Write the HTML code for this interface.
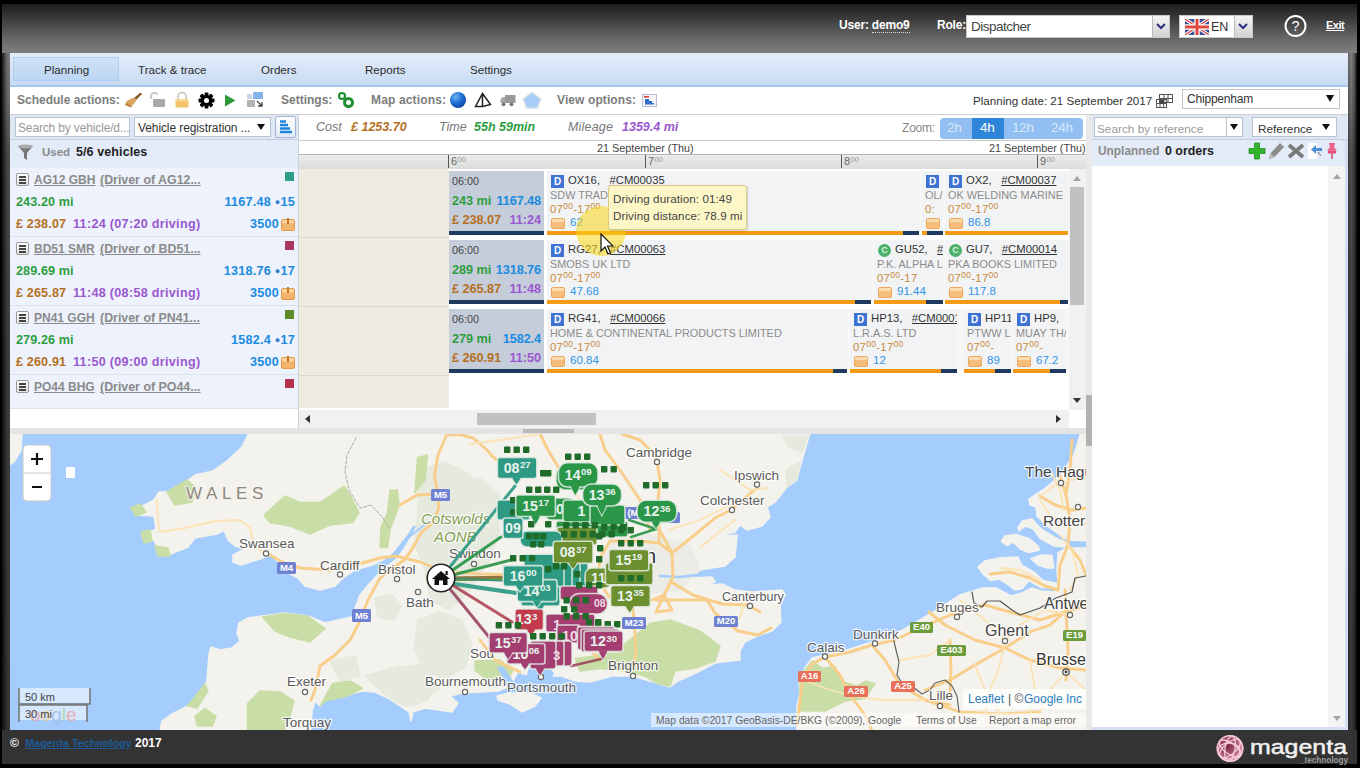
<!DOCTYPE html>
<html><head><meta charset="utf-8"><title>Planning</title>
<style>
*{box-sizing:border-box;margin:0;padding:0}
html,body{width:1360px;height:768px;overflow:hidden;background:#000}
body{font-family:"Liberation Sans",sans-serif;font-size:12px;color:#333;position:relative}
.abs{position:absolute}
#bg{left:2px;top:4px;width:1355px;height:760px;background:linear-gradient(#1c1c1c 0px,#3a3a3a 14px,#6a6a6a 36px,#808080 50px,#6e6e6e 100px,#505050 150px,#444 300px,#3a3a3a 726px)}
#bgl{left:2px;top:53px;width:9px;height:677px;background:linear-gradient(90deg,rgba(0,0,0,.8),rgba(0,0,0,.15) 55%,rgba(0,0,0,0))}
#bgr{left:1348px;top:53px;width:9px;height:677px;background:linear-gradient(90deg,rgba(0,0,0,.25),rgba(0,0,0,.0) 35%,rgba(0,0,0,.3) 70%,rgba(0,0,0,.9))}
#foot{left:2px;top:730px;width:1355px;height:34px;background:#333}
.w{color:#fff;font-weight:700}
#app{left:10px;top:53px;width:1338px;height:677px;background:#fff;overflow:hidden}
/* everything inside #app uses page coords via inner offset wrapper */
#in{position:absolute;left:-10px;top:-53px;width:1360px;height:768px}
#tabs{left:10px;top:53px;width:1338px;height:33px;background:linear-gradient(#e4edf9,#d3e2f6 60%,#c7dbf4)}
#tabline{left:10px;top:85px;width:1338px;height:2px;background:#a9c6ec}
.tab{top:63px;font-size:11.6px;color:#2b2b2b;white-space:nowrap}
#tabsel{left:13px;top:57px;width:106px;height:24px;background:linear-gradient(#cfe2f7,#bcd6f3);border:1px solid #b3cdee}
.lbl{font-weight:700;color:#7d7d7d;font-size:12px;white-space:nowrap}
.t{white-space:nowrap}

.g{color:#2d9e3f}.b{color:#1a8be0}.o{color:#b5701f}.p{color:#9a58cf}
.vb{font-weight:700;font-size:12px;white-space:nowrap;position:absolute}
.vn{font-weight:700;font-size:12px;white-space:nowrap;position:absolute;color:#8a8a8a;text-decoration:underline}
.row{position:absolute;left:10px;width:289px;background:#edf2fc}
.ham{position:absolute;left:16px;width:13px;height:13px;border:1px solid #999;border-radius:2px;background:linear-gradient(#fff,#e2e2e2)}
.ham i{position:absolute;left:2px;width:7px;height:1.500px;background:#444}
.sq{position:absolute;left:285px;width:9px;height:9px;margin-top:-1px}
.bx{position:absolute;left:281px;width:14px;height:14px}
.inp{position:absolute;background:#fff;border:1px solid #b9c2d0;font-size:12px;color:#9a9a9a;white-space:nowrap;overflow:hidden;padding:3px 0 0 2px}
.sel{position:absolute;background:#fff;border:1px solid #b9c2d0;font-size:12px;color:#333;white-space:nowrap;overflow:hidden;padding:3px 0 0 3px}
.arr{position:absolute;border:4px solid transparent;border-top:6px solid #111;border-bottom:0}
.it{position:absolute;font-style:italic;font-size:12.500px;white-space:nowrap;top:120px}

.gr{position:absolute;left:449px;width:620px;height:61px;background:#f7f7f8}
.ob{position:absolute;height:60px;background:#f2f3f5;overflow:hidden}
.ob2{position:absolute;height:60px;overflow:hidden}
.bar{position:absolute;height:4px}
.gt{position:absolute;font-size:11.300px;white-space:nowrap;color:#333}
.gc{position:absolute;font-size:10.900px;white-space:nowrap;color:#8c8c8c}
.tw{position:absolute;font-size:11.300px;white-space:nowrap;color:#c98a3a;letter-spacing:.3px}
.tw sup{font-size:8.500px;vertical-align:top;position:relative;top:-2px}
.wt{position:absolute;font-size:11.500px;white-space:nowrap;color:#2f95e6}
.di{position:absolute;width:13px;height:13px;background:#3f73d3;color:#fff;font-size:10px;font-weight:700;text-align:center;line-height:13px}
.ci{position:absolute;width:13px;height:13px;border-radius:7px;background:#4caf6a;color:#d9f2df;font-size:9px;font-weight:700;text-align:center;line-height:13px}
.sb{position:absolute;font-weight:700;font-size:12.700px;white-space:nowrap;letter-spacing:-.05px}
</style></head><body>
<div id="bg" class="abs"></div><div id="bgl" class="abs"></div><div id="bgr" class="abs"></div>
<div id="foot" class="abs"></div>
<!--HEADER-->
<div class="abs w t" style="left:839px;top:18px;font-size:12px;letter-spacing:-.2px">User: <span style="border-bottom:1px dotted #ddd">demo9</span></div>
<div class="abs w t" style="left:937px;top:18px;font-size:12px;letter-spacing:-.2px">Role:</div>
<div class="abs" style="left:966px;top:15px;width:204px;height:23px;background:#fff;border:1px solid #c9c9c9"></div>
<div class="abs t" style="left:971px;top:19px;font-size:13.5px;color:#444;letter-spacing:-.5px">Dispatcher</div>
<div class="abs" style="left:1152px;top:16px;width:17px;height:21px;background:linear-gradient(#f4f4f4,#d2d2d2);border-left:1px solid #bbb"></div>
<svg class="abs" style="left:1155px;top:22px" width="12" height="9" viewBox="0 0 12 9"><path d="M2 2l4 4 4-4" fill="none" stroke="#2b2f7e" stroke-width="2"/></svg>
<div class="abs" style="left:1179px;top:15px;width:74px;height:23px;background:#fff;border:1px solid #c9c9c9"></div>
<svg class="abs" style="left:1185px;top:19px" width="24" height="16" viewBox="0 0 24 16"><rect width="24" height="16" fill="#3c4c9c"/><path d="M0 0L24 16M24 0L0 16" stroke="#fff" stroke-width="3.4"/><path d="M0 0L24 16M24 0L0 16" stroke="#d8423a" stroke-width="1.2"/><path d="M12 0V16M0 8H24" stroke="#fff" stroke-width="5.4"/><path d="M12 0V16M0 8H24" stroke="#e0483e" stroke-width="3"/></svg>
<div class="abs t" style="left:1211px;top:20px;font-size:12.5px;color:#333">EN</div>
<div class="abs" style="left:1234px;top:16px;width:18px;height:21px;background:linear-gradient(#f4f4f4,#d2d2d2);border-left:1px solid #bbb"></div>
<svg class="abs" style="left:1237px;top:22px" width="12" height="9" viewBox="0 0 12 9"><path d="M2 2l4 4 4-4" fill="none" stroke="#2b2f7e" stroke-width="2"/></svg>
<svg class="abs" style="left:1283px;top:14px" width="24" height="24" viewBox="0 0 24 24"><circle cx="12.500" cy="12" r="10" fill="none" stroke="#fff" stroke-width="1.900"/><text x="12.500" y="17" text-anchor="middle" font-family="Liberation Sans" font-size="14.500" fill="#fff">?</text></svg>
<div class="abs w t" style="left:1326px;top:19px;font-size:11px;letter-spacing:-.5px;text-decoration:underline">Exit</div>
<!--/HEADER-->
<div id="app" class="abs"><div id="in">
<div id="tabs" class="abs"></div><div id="tabline" class="abs"></div>
<div id="tabsel" class="abs"></div>
<div class="abs tab" style="left:44px">Planning</div>
<div class="abs tab" style="left:138px">Track &amp; trace</div>
<div class="abs tab" style="left:261px">Orders</div>
<div class="abs tab" style="left:365px">Reports</div>
<div class="abs tab" style="left:470px">Settings</div>
<!--TOOLBAR-->
<div class="abs lbl" style="left:17px;top:93px">Schedule actions:</div>
<svg class="abs" style="left:124px;top:91px" width="19" height="18" viewBox="0 0 19 18"><path d="M16.5 1.5l1.5 1.5-6 6-2-2z" fill="#8a5a2a"/><path d="M9.5 6.5l3 3-4.5 5.5-6.5-2.5 1-2.5z" fill="#d9a45c"/><path d="M2 12l6 3-1 1.500-6-2.500z" fill="#b7803c"/></svg>
<svg class="abs" style="left:149px;top:91px" width="17" height="17" viewBox="0 0 17 17"><path d="M2 8V5a3.500 3.500 0 0 1 6.500-1.500" fill="none" stroke="#c9c9c9" stroke-width="2"/><rect x="4" y="8" width="12" height="8" rx="1" fill="#a9a9a9"/></svg>
<svg class="abs" style="left:174px;top:91px" width="16" height="17" viewBox="0 0 16 17"><path d="M4 8V5.500a4 4 0 0 1 8 0V8" fill="none" stroke="#d3cfc4" stroke-width="2"/><rect x="1.500" y="8" width="13" height="8.500" rx="1" fill="#f1c468"/><rect x="1.500" y="8" width="13" height="2.500" fill="#f7d892"/></svg>
<svg class="abs" style="left:198px;top:92px" width="17" height="17" viewBox="-8.500 -8.500 17 17"><g fill="#000"><circle r="5.600"/><rect x="-1.900" y="-8" width="3.800" height="16" rx=".8" transform="rotate(0)"/><rect x="-1.900" y="-8" width="3.800" height="16" rx=".8" transform="rotate(45)"/><rect x="-1.900" y="-8" width="3.800" height="16" rx=".8" transform="rotate(90)"/><rect x="-1.900" y="-8" width="3.800" height="16" rx=".8" transform="rotate(135)"/></g><circle r="2.500" fill="#fff"/></svg>
<svg class="abs" style="left:224px;top:94px" width="13" height="13" viewBox="0 0 13 13"><path d="M1 .5L11.500 6.500 1 12.500z" fill="#2d9a37"/></svg>
<svg class="abs" style="left:246px;top:91px" width="18" height="17" viewBox="0 0 18 17"><rect x="7" y="1" width="10" height="7" fill="#86b4ea"/><rect x="1" y="9" width="8" height="7" fill="#b3b3b3"/><rect x="1" y="3" width="5" height="5" fill="#c9d3e2"/><path d="M11 10l5 5M16 11v4h-4" stroke="#444" stroke-width="1.300" fill="none"/></svg>
<div class="abs lbl" style="left:281px;top:93px">Settings:</div>
<svg class="abs" style="left:337px;top:91px" width="18" height="18" viewBox="0 0 18 18"><circle cx="5" cy="5" r="3" fill="none" stroke="#1f8f32" stroke-width="2.200"/><circle cx="11.500" cy="11.500" r="4" fill="none" stroke="#1f8f32" stroke-width="3"/></svg>
<div class="abs lbl" style="left:371px;top:93px;letter-spacing:.15px">Map actions:</div>
<svg class="abs" style="left:450px;top:92px" width="16" height="16" viewBox="0 0 16 16"><defs><radialGradient id="gl" cx=".35" cy=".3" r=".8"><stop offset="0" stop-color="#6fb1f5"/><stop offset=".5" stop-color="#1f6fd6"/><stop offset="1" stop-color="#0c3f9a"/></radialGradient></defs><circle cx="8" cy="8" r="8" fill="url(#gl)"/></svg>
<svg class="abs" style="left:474px;top:92px" width="18" height="16" viewBox="0 0 18 16"><path d="M1.500 14.500L8.500 1.500l8 11-8 2zM8.500 1.500v13" fill="none" stroke="#222" stroke-width="1.500"/></svg>
<svg class="abs" style="left:500px;top:94px" width="16" height="13" viewBox="0 0 16 13"><rect x="5" y="1" width="10.500" height="8" fill="#9a9a9a"/><path d="M0.500 9V5.500L2.500 3H5v6z" fill="#a8a8a8"/><circle cx="3.500" cy="10.300" r="1.900" fill="#777"/><circle cx="11.500" cy="10.300" r="1.900" fill="#777"/></svg>
<svg class="abs" style="left:522px;top:91px" width="20" height="18" viewBox="0 0 20 18"><path d="M10 1.500L18.500 8l-3 9h-11l-3-9z" fill="#a5cdf5" stroke="#d4dde8" stroke-width="1.500"/></svg>
<div class="abs lbl" style="left:557px;top:93px;letter-spacing:.1px">View options:</div>
<svg class="abs" style="left:642px;top:94px" width="15" height="13" viewBox="0 0 15 13"><rect x=".5" y=".5" width="14" height="12" fill="#f4f4fa" stroke="#b9bcd8"/><rect x="2" y="2" width="5" height="1.600" fill="#d8423a"/><path d="M3 5h4v2h3v2h2v1.500H3z" fill="#2a6fc9"/></svg>
<div class="abs t" style="left:973px;top:94px;font-size:11.6px;color:#333">Planning date: 21 September 2017</div>
<svg class="abs" style="left:1155px;top:93px" width="19" height="16" viewBox="0 0 19 16"><g fill="none" stroke="#555" stroke-width="1"><rect x="4.500" y="1.500" width="13" height="8"/><path d="M9 1.500v8M13 1.500v8M4.500 5.500h13"/><rect x="1.500" y="6.500" width="10" height="8"/><path d="M5 6.500v8M8.500 6.500v8M1.500 10.500h10"/></g><rect x="5" y="7" width="3.500" height="3.500" fill="#444"/></svg>
<div class="abs" style="left:1182px;top:89px;width:158px;height:20px;background:#fff;border:1px solid #c4c4c4"></div>
<div class="abs t" style="left:1187px;top:92px;font-size:12px;color:#333;letter-spacing:-.2px">Chippenham</div>
<div class="abs" style="left:1326px;top:95px;border:4.500px solid transparent;border-top:7px solid #111;border-bottom:0"></div>
<div class="abs" style="left:10px;top:114px;width:1338px;height:1px;background:#cfcfcf"></div>
<!--/TOOLBAR-->
<!--LEFT-->
<div class="abs" style="left:10px;top:115px;width:289px;height:25px;background:#dfe7f5;border-right:1px solid #b9c3d6;border-bottom:1px solid #c3ccdc"></div>
<div class="inp" style="left:15px;top:117px;width:115px;height:20px;letter-spacing:-.15px">Search by vehicle/d...</div>
<div class="sel" style="left:134px;top:117px;width:137px;height:20px;letter-spacing:-.1px">Vehicle registration ...</div>
<div class="arr" style="left:257px;top:124px"></div>
<div class="abs" style="left:275px;top:116px;width:21px;height:22px;background:linear-gradient(#fdfdfd,#e4ebf5);border:1px solid #9fb6d6;border-radius:2px"></div>
<svg class="abs" style="left:279px;top:120px" width="13" height="14" viewBox="0 0 13 14"><path d="M1 1.500h6M1 5h8M1 8.500h10M1 12h12" stroke="#1f86e0" stroke-width="2.400"/></svg>
<div class="abs" style="left:10px;top:140px;width:289px;height:28px;background:#e3ebf9"></div>
<svg class="abs" style="left:17px;top:144px" width="17" height="18" viewBox="0 0 17 18"><path d="M1 2q7.500 3 15 0l-6 7v7l-3-2v-5z" fill="#777"/><ellipse cx="8.500" cy="2.500" rx="7.500" ry="2" fill="#aaa"/></svg>
<div class="vb" style="left:42px;top:146px;color:#8a8a8a;font-size:11.500px">Used</div>
<div class="vb" style="left:76px;top:145px;color:#222;font-size:12.500px;letter-spacing:.1px">5/6 vehicles</div>
<div class="row" style="top:168px;height:68px"></div>
<div class="abs" style="left:10px;top:236px;width:289px;height:1px;background:#dde3ee"></div>
<div class="ham" style="top:173px"><i style="top:2px"></i><i style="top:5px"></i><i style="top:8px"></i></div>
<div class="vn" style="left:34px;top:173px">AG12 GBH</div><div class="vn" style="left:100px;top:173px;font-size:12.400px">(Driver of AG12...</div>
<div class="sq" style="top:173px;background:#2f9e86"></div>
<div class="vb g" style="left:16px;top:195px;font-size:12.600px;letter-spacing:.1px">243.20 mi</div>
<div class="vb b" style="right:1065px;top:195px;font-size:12.600px;letter-spacing:.25px">1167.48 <span style="font-size:9px;position:relative;top:-1px;color:#2f80c8">●</span>15</div>
<div class="vb o" style="left:16px;top:217px;font-size:12.600px;letter-spacing:.15px">£ 238.07</div>
<div class="vb p" style="left:73px;top:217px;font-size:12.600px;letter-spacing:.3px">11:24 (07:20 driving)</div>
<div class="vb b" style="left:250px;top:217px;font-size:12.600px;letter-spacing:.25px">3500</div>
<svg class="bx" style="top:217px" viewBox="0 0 14 14"><rect x=".5" y="2.500" width="13" height="11" rx="1.500" fill="#f3b56a" stroke="#e09a45"/><rect x="1" y="3" width="12" height="3.500" fill="#f9d29c"/><rect x="6" y="1" width="2" height="6" fill="#c9782a"/></svg>
<div class="row" style="top:237px;height:68px"></div>
<div class="abs" style="left:10px;top:305px;width:289px;height:1px;background:#dde3ee"></div>
<div class="ham" style="top:242px"><i style="top:2px"></i><i style="top:5px"></i><i style="top:8px"></i></div>
<div class="vn" style="left:34px;top:242px">BD51 SMR</div><div class="vn" style="left:100px;top:242px;font-size:12.400px">(Driver of BD51...</div>
<div class="sq" style="top:242px;background:#a8385f"></div>
<div class="vb g" style="left:16px;top:264px;font-size:12.600px;letter-spacing:.1px">289.69 mi</div>
<div class="vb b" style="right:1065px;top:264px;font-size:12.600px;letter-spacing:.25px">1318.76 <span style="font-size:9px;position:relative;top:-1px;color:#2f80c8">●</span>17</div>
<div class="vb o" style="left:16px;top:286px;font-size:12.600px;letter-spacing:.15px">£ 265.87</div>
<div class="vb p" style="left:73px;top:286px;font-size:12.600px;letter-spacing:.3px">11:48 (08:58 driving)</div>
<div class="vb b" style="left:250px;top:286px;font-size:12.600px;letter-spacing:.25px">3500</div>
<svg class="bx" style="top:286px" viewBox="0 0 14 14"><rect x=".5" y="2.500" width="13" height="11" rx="1.500" fill="#f3b56a" stroke="#e09a45"/><rect x="1" y="3" width="12" height="3.500" fill="#f9d29c"/><rect x="6" y="1" width="2" height="6" fill="#c9782a"/></svg>
<div class="row" style="top:306px;height:68px"></div>
<div class="abs" style="left:10px;top:374px;width:289px;height:1px;background:#dde3ee"></div>
<div class="ham" style="top:311px"><i style="top:2px"></i><i style="top:5px"></i><i style="top:8px"></i></div>
<div class="vn" style="left:34px;top:311px">PN41 GGH</div><div class="vn" style="left:100px;top:311px;font-size:12.400px">(Driver of PN41...</div>
<div class="sq" style="top:311px;background:#5e8a2a"></div>
<div class="vb g" style="left:16px;top:333px;font-size:12.600px;letter-spacing:.1px">279.26 mi</div>
<div class="vb b" style="right:1065px;top:333px;font-size:12.600px;letter-spacing:.25px">1582.4 <span style="font-size:9px;position:relative;top:-1px;color:#2f80c8">●</span>17</div>
<div class="vb o" style="left:16px;top:355px;font-size:12.600px;letter-spacing:.15px">£ 260.91</div>
<div class="vb p" style="left:73px;top:355px;font-size:12.600px;letter-spacing:.3px">11:50 (09:00 driving)</div>
<div class="vb b" style="left:250px;top:355px;font-size:12.600px;letter-spacing:.25px">3500</div>
<svg class="bx" style="top:355px" viewBox="0 0 14 14"><rect x=".5" y="2.500" width="13" height="11" rx="1.500" fill="#f3b56a" stroke="#e09a45"/><rect x="1" y="3" width="12" height="3.500" fill="#f9d29c"/><rect x="6" y="1" width="2" height="6" fill="#c9782a"/></svg>
<div class="row" style="top:375px;height:33px"></div>
<div class="abs" style="left:10px;top:408px;width:289px;height:1px;background:#dde3ee"></div>
<div class="ham" style="top:380px"><i style="top:2px"></i><i style="top:5px"></i><i style="top:8px"></i></div>
<div class="vn" style="left:34px;top:380px">PO44 BHG</div><div class="vn" style="left:100px;top:380px;font-size:12.400px">(Driver of PO44...</div>
<div class="sq" style="top:380px;background:#b5324f"></div>
<div class="abs" style="left:298px;top:115px;width:1px;height:315px;background:#c9d1df"></div>
<div class="abs" style="left:299px;top:140px;width:787px;height:1px;background:#c9c9c9"></div>
<div class="it" style="left:316px;color:#777">Cost</div><div class="it o" style="left:351px;font-weight:700">£ 1253.70</div>
<div class="it" style="left:439px;color:#777">Time</div><div class="it g" style="left:474px;font-weight:700">55h 59min</div>
<div class="it" style="left:568px;color:#777;letter-spacing:.2px">Mileage</div><div class="it p" style="left:622px;font-weight:700">1359.4 mi</div>
<div class="abs t" style="left:902px;top:121px;font-size:12px;color:#888;letter-spacing:-.2px">Zoom:</div>
<div class="abs" style="left:940px;top:118px;width:143px;height:21px;background:#92bff1;border-radius:4px"></div>
<div class="abs" style="left:972px;top:118px;width:32px;height:21px;background:#2f86d9"></div>
<div class="abs t" style="left:947px;top:120px;font-size:13.500px;color:#d7e8fb;letter-spacing:-.3px">2h</div>
<div class="abs t" style="left:980px;top:120px;font-size:13.500px;color:#fff;letter-spacing:-.3px">4h</div>
<div class="abs t" style="left:1012px;top:120px;font-size:13.500px;color:#d7e8fb;letter-spacing:-.3px">12h</div>
<div class="abs t" style="left:1051px;top:120px;font-size:13.500px;color:#d7e8fb;letter-spacing:-.3px">24h</div>
<!--/LEFT-->
<!--GANTT-->
<div class="abs t" style="left:597px;top:142px;font-size:10.800px;color:#444">21 September (Thu)</div>
<div class="abs t" style="left:989px;top:142px;font-size:10.800px;color:#444">21 September (Thu)</div>
<div class="abs" style="left:299px;top:154px;width:787px;height:1px;background:#b5b5b5"></div>
<div class="abs" style="left:299px;top:155px;width:787px;height:14px;background:linear-gradient(#ececec,#dcdcdc)"></div>
<div class="abs" style="left:448px;top:155px;width:1px;height:13px;background:#555"></div><div class="abs t" style="left:451px;top:155px;font-size:11px;color:#666">6<span style="font-size:8px;position:relative;top:-3px;color:#999">00</span></div>
<div class="abs" style="left:645px;top:155px;width:1px;height:13px;background:#555"></div><div class="abs t" style="left:648px;top:155px;font-size:11px;color:#666">7<span style="font-size:8px;position:relative;top:-3px;color:#999">00</span></div>
<div class="abs" style="left:841px;top:155px;width:1px;height:13px;background:#555"></div><div class="abs t" style="left:844px;top:155px;font-size:11px;color:#666">8<span style="font-size:8px;position:relative;top:-3px;color:#999">00</span></div>
<div class="abs" style="left:1037px;top:155px;width:1px;height:13px;background:#555"></div><div class="abs t" style="left:1040px;top:155px;font-size:11px;color:#666">9<span style="font-size:8px;position:relative;top:-3px;color:#999">00</span></div>
<div class="abs" style="left:299px;top:169px;width:150px;height:239px;background:#efebe1"></div>
<div class="abs" style="left:299px;top:237px;width:150px;height:1px;background:#ddd8cb"></div>
<div class="abs" style="left:299px;top:306px;width:150px;height:1px;background:#ddd8cb"></div>
<div class="abs" style="left:299px;top:375px;width:150px;height:1px;background:#ddd8cb"></div>
<div class="gr" style="top:171px"></div>
<div class="abs" style="left:449px;top:171px;width:95px;height:60px;background:#c6cdda"></div><div class="bar" style="left:449px;top:231px;width:95px;background:#1f3a60"></div>
<div class="abs t" style="left:452px;top:175px;font-size:10.800px;color:#444">06:00</div><div class="sb g" style="left:452px;top:194px">243 mi</div><div class="sb b" style="right:819px;top:194px;letter-spacing:-.1px">1167.48</div><div class="sb o" style="left:452px;top:213px">£ 238.07</div><div class="sb p" style="right:819px;top:213px">11:24</div>
<div class="ob" style="left:547px;top:171px;width:372px"><div class="di" style="left:4px;top:4px">D</div><div class="gt" style="left:21px;top:3px">OX16,&nbsp;&nbsp; <u>#CM00035</u></div><div class="gc" style="left:3px;top:18px">SDW TRAD</div><div class="tw" style="left:3px;top:32px">07<sup>00</sup>-17<sup>00</sup></div><svg class="abs" style="left:4px;top:46px" width="14" height="12" viewBox="0 0 14 12"><rect x=".5" y="1.500" width="13" height="10" rx="1.500" fill="#f6bd7c" stroke="#eba75a"/><rect x="1" y="2" width="12" height="3" fill="#fbdcb0"/></svg><div class="wt" style="left:23px;top:45px">62</div></div>
<div class="bar" style="left:547px;top:231px;width:356px;background:#f59a14"></div><div class="bar" style="left:903px;top:231px;width:16px;background:#1f3a60"></div>
<div class="ob" style="left:922px;top:171px;width:21px"><div class="di" style="left:4px;top:4px">D</div><div class="gt" style="left:21px;top:3px">&nbsp;&nbsp; <u></u></div><div class="gc" style="left:3px;top:18px">OL/</div><div class="tw" style="left:3px;top:32px">0:</div><svg class="abs" style="left:4px;top:46px" width="14" height="12" viewBox="0 0 14 12"><rect x=".5" y="1.500" width="13" height="10" rx="1.500" fill="#f6bd7c" stroke="#eba75a"/><rect x="1" y="2" width="12" height="3" fill="#fbdcb0"/></svg><div class="wt" style="left:23px;top:45px"></div></div>
<div class="bar" style="left:922px;top:231px;width:5px;background:#f59a14"></div><div class="bar" style="left:927px;top:231px;width:16px;background:#1f3a60"></div>
<div class="ob" style="left:945px;top:171px;width:123px"><div class="di" style="left:4px;top:4px">D</div><div class="gt" style="left:21px;top:3px">OX2,&nbsp;&nbsp; <u>#CM00037</u></div><div class="gc" style="left:3px;top:18px">OK WELDING MARINE</div><div class="tw" style="left:3px;top:32px">07<sup>00</sup>-17<sup>00</sup></div><svg class="abs" style="left:4px;top:46px" width="14" height="12" viewBox="0 0 14 12"><rect x=".5" y="1.500" width="13" height="10" rx="1.500" fill="#f6bd7c" stroke="#eba75a"/><rect x="1" y="2" width="12" height="3" fill="#fbdcb0"/></svg><div class="wt" style="left:23px;top:45px">86.8</div></div>
<div class="bar" style="left:945px;top:231px;width:123px;background:#f59a14"></div>
<div class="gr" style="top:240px"></div>
<div class="abs" style="left:449px;top:240px;width:95px;height:60px;background:#c6cdda"></div><div class="bar" style="left:449px;top:300px;width:95px;background:#1f3a60"></div>
<div class="abs t" style="left:452px;top:244px;font-size:10.800px;color:#444">06:00</div><div class="sb g" style="left:452px;top:263px">289 mi</div><div class="sb b" style="right:819px;top:263px;letter-spacing:-.1px">1318.76</div><div class="sb o" style="left:452px;top:282px">£ 265.87</div><div class="sb p" style="right:819px;top:282px">11:48</div>
<div class="ob" style="left:547px;top:240px;width:324px"><div class="di" style="left:4px;top:4px">D</div><div class="gt" style="left:21px;top:3px">RG27,&nbsp;&nbsp; <u>#CM00063</u></div><div class="gc" style="left:3px;top:18px">SMOBS UK LTD</div><div class="tw" style="left:3px;top:32px">07<sup>00</sup>-17<sup>00</sup></div><svg class="abs" style="left:4px;top:46px" width="14" height="12" viewBox="0 0 14 12"><rect x=".5" y="1.500" width="13" height="10" rx="1.500" fill="#f6bd7c" stroke="#eba75a"/><rect x="1" y="2" width="12" height="3" fill="#fbdcb0"/></svg><div class="wt" style="left:23px;top:45px">47.68</div></div>
<div class="bar" style="left:547px;top:300px;width:308px;background:#f59a14"></div><div class="bar" style="left:855px;top:300px;width:16px;background:#1f3a60"></div>
<div class="ob" style="left:874px;top:240px;width:69px"><div class="ci" style="left:4px;top:4px">C</div><div class="gt" style="left:21px;top:3px">GU52,&nbsp;&nbsp; <u>#CM</u></div><div class="gc" style="left:3px;top:18px">P.K. ALPHA L</div><div class="tw" style="left:3px;top:32px">07<sup>00</sup>-17</div><svg class="abs" style="left:4px;top:46px" width="14" height="12" viewBox="0 0 14 12"><rect x=".5" y="1.500" width="13" height="10" rx="1.500" fill="#f6bd7c" stroke="#eba75a"/><rect x="1" y="2" width="12" height="3" fill="#fbdcb0"/></svg><div class="wt" style="left:23px;top:45px">91.44</div></div>
<div class="bar" style="left:874px;top:300px;width:52px;background:#f59a14"></div><div class="bar" style="left:926px;top:300px;width:17px;background:#1f3a60"></div>
<div class="ob" style="left:945px;top:240px;width:123px"><div class="ci" style="left:4px;top:4px">C</div><div class="gt" style="left:21px;top:3px">GU7,&nbsp;&nbsp; <u>#CM00014</u></div><div class="gc" style="left:3px;top:18px">PKA BOOKS LIMITED</div><div class="tw" style="left:3px;top:32px">07<sup>00</sup>-17<sup>00</sup></div><svg class="abs" style="left:4px;top:46px" width="14" height="12" viewBox="0 0 14 12"><rect x=".5" y="1.500" width="13" height="10" rx="1.500" fill="#f6bd7c" stroke="#eba75a"/><rect x="1" y="2" width="12" height="3" fill="#fbdcb0"/></svg><div class="wt" style="left:23px;top:45px">117.8</div></div>
<div class="bar" style="left:945px;top:300px;width:115px;background:#f59a14"></div><div class="bar" style="left:1060px;top:300px;width:8px;background:#1f3a60"></div>
<div class="gr" style="top:309px"></div>
<div class="abs" style="left:449px;top:309px;width:95px;height:60px;background:#c6cdda"></div><div class="bar" style="left:449px;top:369px;width:95px;background:#1f3a60"></div>
<div class="abs t" style="left:452px;top:313px;font-size:10.800px;color:#444">06:00</div><div class="sb g" style="left:452px;top:332px">279 mi</div><div class="sb b" style="right:819px;top:332px;letter-spacing:-.1px">1582.4</div><div class="sb o" style="left:452px;top:351px">£ 260.91</div><div class="sb p" style="right:819px;top:351px">11:50</div>
<div class="ob" style="left:547px;top:309px;width:300px"><div class="di" style="left:4px;top:4px">D</div><div class="gt" style="left:21px;top:3px">RG41,&nbsp;&nbsp; <u>#CM00066</u></div><div class="gc" style="left:3px;top:18px">HOME &amp; CONTINENTAL PRODUCTS LIMITED</div><div class="tw" style="left:3px;top:32px">07<sup>00</sup>-17<sup>00</sup></div><svg class="abs" style="left:4px;top:46px" width="14" height="12" viewBox="0 0 14 12"><rect x=".5" y="1.500" width="13" height="10" rx="1.500" fill="#f6bd7c" stroke="#eba75a"/><rect x="1" y="2" width="12" height="3" fill="#fbdcb0"/></svg><div class="wt" style="left:23px;top:45px">60.84</div></div>
<div class="bar" style="left:547px;top:369px;width:286px;background:#f59a14"></div><div class="bar" style="left:833px;top:369px;width:14px;background:#1f3a60"></div>
<div class="ob" style="left:850px;top:309px;width:107px"><div class="di" style="left:4px;top:4px">D</div><div class="gt" style="left:21px;top:3px">HP13,&nbsp;&nbsp; <u>#CM0001</u></div><div class="gc" style="left:3px;top:18px">L.R.A.S. LTD</div><div class="tw" style="left:3px;top:32px">07<sup>00</sup>-17<sup>00</sup></div><svg class="abs" style="left:4px;top:46px" width="14" height="12" viewBox="0 0 14 12"><rect x=".5" y="1.500" width="13" height="10" rx="1.500" fill="#f6bd7c" stroke="#eba75a"/><rect x="1" y="2" width="12" height="3" fill="#fbdcb0"/></svg><div class="wt" style="left:23px;top:45px">12</div></div>
<div class="bar" style="left:850px;top:369px;width:91px;background:#f59a14"></div><div class="bar" style="left:941px;top:369px;width:16px;background:#1f3a60"></div>
<div class="ob" style="left:964px;top:309px;width:47px"><div class="di" style="left:4px;top:4px">D</div><div class="gt" style="left:21px;top:3px">HP11&nbsp;&nbsp; <u></u></div><div class="gc" style="left:3px;top:18px">PTWW L</div><div class="tw" style="left:3px;top:32px">07<sup>00</sup>-</div><svg class="abs" style="left:4px;top:46px" width="14" height="12" viewBox="0 0 14 12"><rect x=".5" y="1.500" width="13" height="10" rx="1.500" fill="#f6bd7c" stroke="#eba75a"/><rect x="1" y="2" width="12" height="3" fill="#fbdcb0"/></svg><div class="wt" style="left:23px;top:45px">89</div></div>
<div class="bar" style="left:964px;top:369px;width:31px;background:#f59a14"></div><div class="bar" style="left:995px;top:369px;width:16px;background:#1f3a60"></div>
<div class="ob" style="left:1013px;top:309px;width:53px"><div class="di" style="left:4px;top:4px">D</div><div class="gt" style="left:21px;top:3px">HP9,&nbsp;&nbsp; <u>_</u></div><div class="gc" style="left:3px;top:18px">MUAY TH/</div><div class="tw" style="left:3px;top:32px">07<sup>00</sup>-</div><svg class="abs" style="left:4px;top:46px" width="14" height="12" viewBox="0 0 14 12"><rect x=".5" y="1.500" width="13" height="10" rx="1.500" fill="#f6bd7c" stroke="#eba75a"/><rect x="1" y="2" width="12" height="3" fill="#fbdcb0"/></svg><div class="wt" style="left:23px;top:45px">67.2</div></div>
<div class="bar" style="left:1013px;top:369px;width:37px;background:#f59a14"></div><div class="bar" style="left:1050px;top:369px;width:16px;background:#1f3a60"></div>
<div class="abs" style="left:544px;top:169px;width:3px;height:210px;background:#fff"></div>
<div class="abs" style="left:1069px;top:169px;width:17px;height:241px;background:#f1f1f1"></div>
<div class="abs" style="left:1070px;top:187px;width:14px;height:118px;background:#c1c1c1"></div>
<svg class="abs" style="left:1073px;top:176px" width="8" height="5" viewBox="0 0 8 5"><path d="M0 5l4-5 4 5z" fill="#a5a5a5"/></svg>
<svg class="abs" style="left:1073px;top:398px" width="8" height="5" viewBox="0 0 8 5"><path d="M0 0l4 5 4-5z" fill="#333"/></svg>
<div class="abs" style="left:299px;top:410px;width:787px;height:18px;background:#f1f1f1"></div>
<div class="abs" style="left:1069px;top:410px;width:17px;height:18px;background:#fff"></div>
<div class="abs" style="left:477px;top:413px;width:119px;height:12px;background:#c1c1c1"></div>
<svg class="abs" style="left:305px;top:415px" width="5" height="8" viewBox="0 0 5 8"><path d="M5 0L0 4l5 4z" fill="#333"/></svg>
<svg class="abs" style="left:1056px;top:415px" width="5" height="8" viewBox="0 0 5 8"><path d="M0 0l5 4-5 4z" fill="#333"/></svg>
<div class="abs" style="left:10px;top:428px;width:1076px;height:6px;background:#e4e4e4"></div>
<div class="abs" style="left:523px;top:429px;width:51px;height:4px;background:#b9b9b9"></div>
<div class="abs" style="left:576px;top:206px;width:50px;height:50px;border-radius:25px;background:rgba(250,215,20,.55)"></div>
<div class="abs" style="left:608px;top:185px;width:139px;height:45px;background:#fdf7c8;border:1px solid #d8cb86;border-radius:3px;box-shadow:1px 1px 2px rgba(0,0,0,.15)"></div>
<div class="abs t" style="left:613px;top:192px;font-size:11.600px;color:#444;letter-spacing:.1px">Driving duration: 01:49</div>
<div class="abs t" style="left:613px;top:209px;font-size:11.600px;color:#444;letter-spacing:.1px">Driving distance: 78.9 mi</div>
<svg class="abs" style="left:600px;top:233px" width="14" height="22" viewBox="0 0 14 22"><path d="M1 1v17l4-4 3 7 2.500-1-3-7h5.500z" fill="#fff" stroke="#111" stroke-width="1.200"/></svg>
<!--/GANTT-->
<!--RIGHT-->
<div class="abs" style="left:1086px;top:115px;width:6px;height:615px;background:#e9e9e9"></div>
<div class="abs" style="left:1092px;top:115px;width:256px;height:25px;background:#dfe7f5;border-bottom:1px solid #c3ccdc"></div>
<div class="abs" style="left:1092px;top:140px;width:256px;height:26px;background:#e3ebf9"></div>
<div class="abs" style="left:1345px;top:140px;width:3px;height:590px;background:#d3def3"></div>
<div class="abs" style="left:1092px;top:727px;width:256px;height:3px;background:#d5def2"></div>
<div class="abs" style="left:1328px;top:166px;width:17px;height:561px;background:#f4f4f4"></div>
<div class="inp" style="left:1094px;top:117px;width:133px;height:20px;font-size:11.800px;padding-top:3.500px">Search by reference</div>
<div class="sel" style="left:1226px;top:117px;width:17px;height:20px"></div><div class="arr" style="left:1230px;top:124px"></div>
<div class="sel" style="left:1252px;top:117px;width:85px;height:20px;padding-left:5px;font-size:11.800px;padding-top:3.500px">Reference</div><div class="arr" style="left:1322px;top:124px"></div>
<div class="vb" style="left:1098px;top:144px;color:#8a8a8a;font-size:11.900px">Unplanned</div>
<div class="vb" style="left:1165px;top:144px;color:#222;font-size:12.400px">0 orders</div>
<svg class="abs" style="left:1248px;top:142px" width="18" height="18" viewBox="0 0 18 18"><path d="M6.500 1h5v5.500H17v5h-5.500V17h-5v-5.500H1v-5h5.500z" fill="#33b22c" stroke="#1f8f1c" stroke-width=".8"/></svg>
<svg class="abs" style="left:1268px;top:142px" width="17" height="18" viewBox="0 0 17 18"><path d="M12 1l4 4-9.500 10L1 17l1.500-5.500z" fill="#8c8c8c"/><path d="M1 17l1.500-5.500 4 3.500z" fill="#bbb"/></svg>
<svg class="abs" style="left:1287px;top:143px" width="18" height="16" viewBox="0 0 18 16"><path d="M2 2l14 12M16 2L2 14" stroke="#7a7a7a" stroke-width="3.800"/></svg>
<div class="abs" style="left:1308px;top:143px;width:9px;height:16px;background:#fff"></div>
<svg class="abs" style="left:1310px;top:145px" width="14" height="12" viewBox="0 0 14 12"><path d="M1 4.500L6 0v3h6v3H6v3z" fill="#4f8fd6"/><path d="M8 7l3 4" stroke="#888" stroke-width="1.200"/></svg>
<svg class="abs" style="left:1325px;top:142px" width="14" height="18" viewBox="0 0 14 18"><path d="M4 1h6l-1 4 3 3.500H2L5 5z" fill="#ef5f87"/><rect x="3" y="8.500" width="8" height="3" fill="#e84a77"/><path d="M7 11.500V17" stroke="#c74a6a" stroke-width="1.500"/></svg>
<svg class="abs" style="left:1333px;top:174px" width="8" height="5" viewBox="0 0 8 5"><path d="M0 5l4-5 4 5z" fill="#a5a5a5"/></svg>
<svg class="abs" style="left:1333px;top:716px" width="8" height="5" viewBox="0 0 8 5"><path d="M0 0l4 5 4-5z" fill="#a5a5a5"/></svg>
<div class="abs" style="left:1086px;top:395px;width:6px;height:51px;background:#b2b2b2"></div>
<!--/RIGHT-->
<!--MAP-->
<svg class="abs" style="left:10px;top:434px" width="1076" height="296" viewBox="10 434 1076 296">
<g style="filter:blur(.7px)"><rect x="-10" y="414" width="1116" height="336" fill="#a4cdfd"/>
<path d="M249 433 L242 447 L228 460 L213 471 L195 475 L183 484 L168 492 L159 492 L154 500 L135 510 L138 515 L154 516 L156 529 L144 535 L146 540 L154 540 L159 551 L168 555 L188 547 L195 538 L217 534 L224 530 L228 540 L235 546 L245 549 L233 555 L233 562 L241 565 L260 559 L270 555 L275 558 L283 570 L298 578 L305 586 L320 590 L335 586 L343 578 L355 570 L372 565 L383 560 L392 553 L400 543 L407 534 L413 526 L416 528 L410 538 L402 550 L394 560 L384 568 L370 583 L360 595 L355 608 L352 617 L338 620 L325 623 L308 616 L285 613 L262 616 L248 618 L239 623 L237 633 L240 641 L232 648 L220 650 L211 647 L209 654 L207 681 L200 693 L188 706 L172 714 L162 721 L160 731 L311 731 L312 711 L315 701 L320 706 L325 698 L348 695 L362 691 L375 692 L388 698 L400 706 L409 712 L411 721 L413 712 L425 708 L452 712 L458 703 L450 696 L462 693 L482 692 L498 691 L510 686 L518 672 L530 676 L540 678 L550 676 L562 676 L575 681 L590 682 L612 676 L632 676 L650 681 L670 687 L678 681 L700 671 L715 663 L722 662 L740 660 L740 651 L745 642 L757 636 L772 631 L781 622 L780 606 L785 595 L782 590 L752 592 L735 590 L722 584 L702 586 L715 582 L712 577 L690 578 L677 580 L662 576 L677 573 L692 572 L705 569 L725 566 L735 557 L736 547 L737 535 L717 537 L735 532 L740 525 L747 530 L762 526 L770 517 L767 507 L775 502 L787 487 L797 480 L800 467 L805 450 L810 433Z" fill="#f4f2ec" stroke="#f4f2ec" stroke-width="1.5" stroke-linejoin="round" />
<path d="M497 696 L510 693 L530 693 L541 698 L535 706 L522 712 L510 704 L498 700Z" fill="#f4f2ec" stroke="#f4f2ec" stroke-width="1.5" stroke-linejoin="round" />
<path d="M8 432 L22 432 L21 450 L14 462 L8 466Z" fill="#f4f2ec" stroke="#f4f2ec" stroke-width="1.5" stroke-linejoin="round" />
<path d="M797 731 L797 706 L800 693 L799 683 L805 668 L812 658 L825 655 L847 650 L872 642 L892 636 L915 623 L940 608 L960 595 L983 588 L996 588 L1011 596 L1022 593 L1032 588 L1041 591 L1054 592 L1058 588 L1058 584 L1057 570 L1058 553 L1066 548 L1088 548 L1088 731Z" fill="#f4f2ec" stroke="#f4f2ec" stroke-width="1.5" stroke-linejoin="round" />
<path d="M1081 432 L1074 455 L1060 476 L1043 490 L1029 499 L1030 505 L1036 507 L1037 516 L1047 526 L1060 535 L1069 540 L1088 541 L1088 432Z" fill="#f4f2ec" stroke="#f4f2ec" stroke-width="1.5" stroke-linejoin="round" />
<path d="M1018 527.5 L1022.5 521 L1032 519 L1041 529 L1054 537 L1066 543 L1064.7 547 L1054 546 L1040 538.4 L1033.4 529 L1025.6 526 L1019 530.6Z" fill="#f4f2ec" stroke="#f4f2ec" stroke-width="1.5" stroke-linejoin="round" />
<path d="M1001.4 541.5 L1005 536 L1016 534.5 L1028.7 538.4 L1038 546 L1039.7 550 L1028.7 552.5 L1021 549.4 L1013 542 L1007 545.5Z" fill="#f4f2ec" stroke="#f4f2ec" stroke-width="1.5" stroke-linejoin="round" />
<path d="M1031 558.75 L1041 555 L1052 555.6 L1053.75 568 L1047.5 568 L1038 565Z" fill="#f4f2ec" stroke="#f4f2ec" stroke-width="1.5" stroke-linejoin="round" />
<path d="M978 567 L985 561 L999 558 L1017.8 557 L1021.7 565 L1035 572.8 L1042.8 580.6 L1058.4 583.75 L1058.4 588.4 L1041 587.6 L1028.75 580.6 L1022.5 588.4 L1014.7 590 L1006.9 583.75 L999 579 L991 580.6 L983.4 574.4Z" fill="#f4f2ec" stroke="#f4f2ec" stroke-width="1.5" stroke-linejoin="round" />
<path d="M420 470 L445 462 L470 475 L490 500 L500 530 L490 560 L470 590 L450 610 L430 600 L425 570 L415 545 L418 510Z" fill="#e5e9de" stroke="#e5e9de" stroke-width="1.5" stroke-linejoin="round" />
<path d="M330 661 L355 656 L360 676 L340 681Z" fill="#e5e9de" stroke="#e5e9de" stroke-width="1.5" stroke-linejoin="round" />
<path d="M365 676 L400 666 L425 676 L440 688 L420 703 L405 706 L387 696Z" fill="#e5e9de" stroke="#e5e9de" stroke-width="1.5" stroke-linejoin="round" />
<path d="M418 620 L440 612 L462 620 L472 645 L465 668 L445 678 L425 672 L414 648Z" fill="#e5e9de" stroke="#e5e9de" stroke-width="1.5" stroke-linejoin="round" />
<path d="M375 598 L392 594 L401 606 L395 620 L378 618Z" fill="#e5e9de" stroke="#e5e9de" stroke-width="1.5" stroke-linejoin="round" />
<path d="M400 668 L420 664 L432 680 L428 700 L410 706 L398 690Z" fill="#e5e9de" stroke="#e5e9de" stroke-width="1.5" stroke-linejoin="round" />
<path d="M452 480 L480 478 L500 495 L498 520 L470 515 L455 500Z" fill="#e5e9de" stroke="#e5e9de" stroke-width="1.5" stroke-linejoin="round" />
<path d="M610 540 L650 535 L690 545 L700 570 L680 590 L640 595 L610 585 L600 560Z" fill="#ecebe6" stroke="#ecebe6" stroke-width="1.5" stroke-linejoin="round" />
<path d="M167 492 L187 480 L195 487 L192 502 L175 505Z" fill="#c9dea7" stroke="#c9dea7" stroke-width="1.5" stroke-linejoin="round" />
<path d="M131 508 L140 504 L146 512 L136 516Z" fill="#c9dea7" stroke="#c9dea7" stroke-width="1.5" stroke-linejoin="round" />
<path d="M141 532 L150 530 L152 541 L144 543Z" fill="#c9dea7" stroke="#c9dea7" stroke-width="1.5" stroke-linejoin="round" />
<path d="M155 546 L168 548 L170 556 L158 556Z" fill="#c9dea7" stroke="#c9dea7" stroke-width="1.5" stroke-linejoin="round" />
<path d="M264 515 L275 505 L285 496 L300 502.5 L320 502.5 L335 492.5 L344 486 L350 495 L359 512.5 L352.5 522.5 L330 525 L310 534 L290 526 L270 522.5Z" fill="#c9dea7" stroke="#c9dea7" stroke-width="1.5" stroke-linejoin="round" />
<path d="M390 490 L397.5 490 L399 505 L390 530 L387.5 547.5 L380 547.5 L381 527.5 L387.5 512.5Z" fill="#c9dea7" stroke="#c9dea7" stroke-width="1.5" stroke-linejoin="round" />
<path d="M417.5 457.5 L427.5 455 L425 480 L415 492.5Z" fill="#c9dea7" stroke="#c9dea7" stroke-width="1.5" stroke-linejoin="round" />
<path d="M262.5 617 L285 613.5 L307.5 616 L325 628.5 L310 642 L290 637 L275 631Z" fill="#c9dea7" stroke="#c9dea7" stroke-width="1.5" stroke-linejoin="round" />
<path d="M247.5 703.5 L260 691 L280 692 L294 701 L290 716 L284 731 L247.5 731Z" fill="#c9dea7" stroke="#c9dea7" stroke-width="1.5" stroke-linejoin="round" />
<path d="M195 716 L205 708.5 L216 716 L212.5 726 L197.5 726Z" fill="#c9dea7" stroke="#c9dea7" stroke-width="1.5" stroke-linejoin="round" />
<path d="M187.5 706 L205 684 L208 691 L197 708Z" fill="#c9dea7" stroke="#c9dea7" stroke-width="1.5" stroke-linejoin="round" />
<path d="M320 706 L332.5 683.5 L350 681 L362.5 688.5 L347.5 696 L325 701Z" fill="#c9dea7" stroke="#c9dea7" stroke-width="1.5" stroke-linejoin="round" />
<path d="M475 661 L500 660 L512.5 671 L507.5 681 L485 678.5 L475 670Z" fill="#c9dea7" stroke="#c9dea7" stroke-width="1.5" stroke-linejoin="round" />
<path d="M575 658.5 L595 656 L625 643.5 L650 623.5 L670 620 L700 631 L720 646 L715 661 L695 668 L675 671 L670 686 L657.5 683.5 L645 676 L625 671 L600 668.5 L580 671Z" fill="#c9dea7" stroke="#c9dea7" stroke-width="1.5" stroke-linejoin="round" />
<path d="M800 676 L812.5 661 L822.5 668.5 L835 666 L840 681 L857.5 686 L865 681 L875 683.5 L865 698.5 L845 701 L825 711 L800 711Z" fill="#c9dea7" stroke="#c9dea7" stroke-width="1.5" stroke-linejoin="round" />
<path d="M783 436 L808 436 L802 452 L790 448Z" fill="#e5e9de" stroke="#e5e9de" stroke-width="1.5" stroke-linejoin="round" />
<path d="M786 470 L800 462 L797 480 L787 487Z" fill="#e5e9de" stroke="#e5e9de" stroke-width="1.5" stroke-linejoin="round" />
<path d="M384 566 L394 558 L402 548 L408 538 L414 527" fill="none" stroke="#a4cdfd" stroke-width="3" stroke-linejoin="round" stroke-linecap="round" />
<path d="M408 538 L418 530 L428 522" fill="none" stroke="#a4cdfd" stroke-width="2" stroke-linejoin="round" stroke-linecap="round" />
<path d="M660 576 L680 577 L696 575" fill="none" stroke="#a4cdfd" stroke-width="2.5" stroke-linejoin="round" stroke-linecap="round" />
<path d="M527 677 L530 668 L536 670 L541 666 L548 668 L553 673 L551 679 L540 680Z" fill="#a4cdfd" stroke="#a4cdfd" stroke-width="1.5" stroke-linejoin="round" />
<path d="M508 688 L503 676 L498 668 L502 667 L509 676 L514 684Z" fill="#a4cdfd" stroke="#a4cdfd" stroke-width="1.5" stroke-linejoin="round" />
<path d="M265 552 L282 562 L300 568 L330 570 L355 565 L380 558 L396 556 L420 562 L445 572 L480 574 L560 576 L620 574 L650 572" fill="none" stroke="#f8ce8a" stroke-width="2.9" stroke-linejoin="round" stroke-linecap="round" />
<path d="M447 434 L438 455 L434.5 475 L437.6 492 L438.7 508 L433.5 522 L421 533 L411 551 L404 560 L393 568 L380 578 L368 600 L358 625 L350 640 L335 655 L320 666 L315 690 L311 700" fill="none" stroke="#f8ce8a" stroke-width="2.9" stroke-linejoin="round" stroke-linecap="round" />
<path d="M436 494 L417 495 L400 505" fill="none" stroke="#f8ce8a" stroke-width="2.9" stroke-linejoin="round" stroke-linecap="round" />
<path d="M447 435 L460 434.5 L473 438 L487 450 L493 457 L506 466" fill="none" stroke="#f8ce8a" stroke-width="2.9" stroke-linejoin="round" stroke-linecap="round" />
<path d="M540 434 L548 450 L560 470 L575 480" fill="none" stroke="#f8ce8a" stroke-width="2.9" stroke-linejoin="round" stroke-linecap="round" />
<path d="M600 434 L605 450 L620 470 L640 500 L650 530" fill="none" stroke="#f8ce8a" stroke-width="2.9" stroke-linejoin="round" stroke-linecap="round" />
<path d="M657 462 L660 480 L658 500 L659 529 L659 543" fill="none" stroke="#f8ce8a" stroke-width="2.9" stroke-linejoin="round" stroke-linecap="round" />
<path d="M622 434 L640 440 L655 455 L657 462" fill="none" stroke="#f8ce8a" stroke-width="2.9" stroke-linejoin="round" stroke-linecap="round" />
<path d="M672 553 L697 533 L715 518 L729 511 L745 498 L757 488" fill="none" stroke="#f8ce8a" stroke-width="2.9" stroke-linejoin="round" stroke-linecap="round" />
<path d="M656 600 L680 600 L707 600 L715 613 L738 631 L758 635 L771 628" fill="none" stroke="#f8ce8a" stroke-width="2.9" stroke-linejoin="round" stroke-linecap="round" />
<path d="M671 582 L693 595 L706 599 L722 604 L748 605 L760 612" fill="none" stroke="#f8ce8a" stroke-width="2.9" stroke-linejoin="round" stroke-linecap="round" />
<path d="M632 600 L634 620 L636 650 L634 668" fill="none" stroke="#f8ce8a" stroke-width="2.9" stroke-linejoin="round" stroke-linecap="round" />
<path d="M610 541 L640 541 L659 543 L672 553 L673 577 L664 595 L650 601 L630 602 L610 598 L598 580 L600 558 L610 541" fill="none" stroke="#f8ce8a" stroke-width="2.9" stroke-linejoin="round" stroke-linecap="round" />
<path d="M659 529 L672 553" fill="none" stroke="#f8ce8a" stroke-width="2.9" stroke-linejoin="round" stroke-linecap="round" />
<path d="M664 595 L672 610 L656 612 L664 595" fill="none" stroke="#f8ce8a" stroke-width="2.9" stroke-linejoin="round" stroke-linecap="round" />
<path d="M560 620 L580 640 L600 660" fill="none" stroke="#f8ce8a" stroke-width="2.9" stroke-linejoin="round" stroke-linecap="round" />
<path d="M480 640 L495 660 L520 672" fill="none" stroke="#f8ce8a" stroke-width="2.9" stroke-linejoin="round" stroke-linecap="round" />
<path d="M797 725 L800 700 L803 680 L812 664 L825 657 L850 652 L872 645 L895 640 L920 628 L950 615 L985 605 L1010 612 L1040 620 L1065 612 L1086 606" fill="none" stroke="#f8ce8a" stroke-width="2.9" stroke-linejoin="round" stroke-linecap="round" />
<path d="M825 657 L840 675 L850 695 L865 715 L872 731" fill="none" stroke="#f8ce8a" stroke-width="2.9" stroke-linejoin="round" stroke-linecap="round" />
<path d="M872 645 L885 660 L900 685 L925 700 L950 705" fill="none" stroke="#f8ce8a" stroke-width="2.9" stroke-linejoin="round" stroke-linecap="round" />
<path d="M929 612 L945 625 L975 640 L1005 648 L1030 660 L1060 668 L1086 670" fill="none" stroke="#f8ce8a" stroke-width="2.9" stroke-linejoin="round" stroke-linecap="round" />
<path d="M950 640 L951 670 L950 695" fill="none" stroke="#f8ce8a" stroke-width="2.9" stroke-linejoin="round" stroke-linecap="round" />
<path d="M925 690 L950 680 L975 665 L1005 648 L1030 632 L1050 625 L1065 612" fill="none" stroke="#f8ce8a" stroke-width="2.9" stroke-linejoin="round" stroke-linecap="round" />
<path d="M925 700 L960 712 L1000 714 L1040 712" fill="none" stroke="#f8ce8a" stroke-width="2.9" stroke-linejoin="round" stroke-linecap="round" />
<path d="M1065 590 L1066 612 L1068 650 L1066 680" fill="none" stroke="#f8ce8a" stroke-width="2.9" stroke-linejoin="round" stroke-linecap="round" />
<path d="M1060 476 L1066 495 L1070 520 L1068 545 L1060 565 L1058 590" fill="none" stroke="#f8ce8a" stroke-width="2.9" stroke-linejoin="round" stroke-linecap="round" />
<path d="M1040 496 L1055 505 L1072 510 L1086 508" fill="none" stroke="#f8ce8a" stroke-width="2.9" stroke-linejoin="round" stroke-linecap="round" />
<path d="M1068 545 L1080 560 L1086 575" fill="none" stroke="#f8ce8a" stroke-width="2.9" stroke-linejoin="round" stroke-linecap="round" />
<path d="M990 574 L1010 572 L1030 578 L1045 586 L1058 590" fill="none" stroke="#f8ce8a" stroke-width="2.9" stroke-linejoin="round" stroke-linecap="round" />
<path d="M1072 440 L1070 470 L1066 495" fill="none" stroke="#f8ce8a" stroke-width="2.9" stroke-linejoin="round" stroke-linecap="round" />
<path d="M157 500 L158 520 L160 532 L185 528 L215 521 L240 520 L250 528 L254 545 L262 552" fill="none" stroke="#fbe3b4" stroke-width="1.8" stroke-linejoin="round" stroke-linecap="round" />
<path d="M700 548 L715 535 L735 520" fill="none" stroke="#fbe3b4" stroke-width="1.8" stroke-linejoin="round" stroke-linecap="round" />
<path d="M740 618 L745 600 L752 592" fill="none" stroke="#fbe3b4" stroke-width="1.8" stroke-linejoin="round" stroke-linecap="round" />
<path d="M560 470 L580 500" fill="none" stroke="#fbe3b4" stroke-width="1.8" stroke-linejoin="round" stroke-linecap="round" />
<path d="M470 444 L500 440 L540 434" fill="none" stroke="#fbe3b4" stroke-width="1.8" stroke-linejoin="round" stroke-linecap="round" />
<path d="M720 470 L750 490 L768 488" fill="none" stroke="#fbe3b4" stroke-width="1.8" stroke-linejoin="round" stroke-linecap="round" />
<path d="M668 530 L700 520 L730 505 L757 497" fill="none" stroke="#fbe3b4" stroke-width="1.8" stroke-linejoin="round" stroke-linecap="round" />
<path d="M1043 494 L1055 485 L1070 480 L1086 478" fill="none" stroke="#fbe3b4" stroke-width="1.8" stroke-linejoin="round" stroke-linecap="round" />
<path d="M1050 470 L1060 490 L1064 510" fill="none" stroke="#fbe3b4" stroke-width="1.8" stroke-linejoin="round" stroke-linecap="round" />
<path d="M1040 500 L1050 515 L1068 525 L1086 524" fill="none" stroke="#fbe3b4" stroke-width="1.8" stroke-linejoin="round" stroke-linecap="round" />
<path d="M1060 535 L1072 550 L1078 575 L1070 590" fill="none" stroke="#fbe3b4" stroke-width="1.8" stroke-linejoin="round" stroke-linecap="round" />
<path d="M1000 568 L1020 570 L1040 580" fill="none" stroke="#fbe3b4" stroke-width="1.8" stroke-linejoin="round" stroke-linecap="round" />
<path d="M960 600 L985 620 L1005 641" fill="none" stroke="#fbe3b4" stroke-width="1.8" stroke-linejoin="round" stroke-linecap="round" />
<path d="M1005 641 L1020 625 L1045 610 L1070 615" fill="none" stroke="#fbe3b4" stroke-width="1.8" stroke-linejoin="round" stroke-linecap="round" />
<path d="M1005 641 L1000 665 L990 690 L985 715" fill="none" stroke="#fbe3b4" stroke-width="1.8" stroke-linejoin="round" stroke-linecap="round" />
<path d="M1030 660 L1035 690 L1030 720" fill="none" stroke="#fbe3b4" stroke-width="1.8" stroke-linejoin="round" stroke-linecap="round" />
<path d="M900 660 L930 655 L950 640" fill="none" stroke="#fbe3b4" stroke-width="1.8" stroke-linejoin="round" stroke-linecap="round" />
<path d="M1066 672 L1050 690 L1040 712" fill="none" stroke="#fbe3b4" stroke-width="1.8" stroke-linejoin="round" stroke-linecap="round" />
<path d="M1066 672 L1086 690" fill="none" stroke="#fbe3b4" stroke-width="1.8" stroke-linejoin="round" stroke-linecap="round" />
<path d="M850 695 L880 700 L925 700" fill="none" stroke="#fbe3b4" stroke-width="1.8" stroke-linejoin="round" stroke-linecap="round" />
<path d="M975 665 L985 690 L1000 714" fill="none" stroke="#fbe3b4" stroke-width="1.8" stroke-linejoin="round" stroke-linecap="round" />
<path d="M803 680 L830 690 L850 695" fill="none" stroke="#fbe3b4" stroke-width="1.8" stroke-linejoin="round" stroke-linecap="round" />
<path d="M356 438 L347 455 L345 472 L349 490 L360 508 L371 505 L383 518 L389 528" fill="none" stroke="#aaa" stroke-width="1" stroke-linejoin="round" stroke-linecap="round" stroke-dasharray="3 2"/>
<path d="M893 637 L896 650 L899 662 L897 675 L902 683 L912 686 L922 694 L930 690 L935 683 L945 680 L952 686 L957 696 L959 712" fill="none" stroke="#666" stroke-width="1.2" stroke-linejoin="round" stroke-linecap="round" />
<path d="M972 592 L974 603 L982 607 L987 601 L1000 601 L1012 610 L1020 615 L1040 608 L1056 598 L1072 592 L1075 578 L1086 576" fill="none" stroke="#555" stroke-width="1.2" stroke-linejoin="round" stroke-linecap="round" />
</g></svg>
<svg class="abs" style="left:10px;top:434px;font-family:'Liberation Sans',sans-serif" width="1076" height="296" viewBox="10 434 1076 296">
<rect x="431" y="489" width="19" height="12" rx="1.5" fill="#6f82d2"/><text x="440.5" y="498.4" font-size="9.5" font-weight="700" fill="#fff" text-anchor="middle">M5</text>
<rect x="277" y="562" width="19" height="12" rx="1.5" fill="#6f82d2"/><text x="286.5" y="571.4" font-size="9.5" font-weight="700" fill="#fff" text-anchor="middle">M4</text>
<rect x="352" y="609" width="19" height="13" rx="1.5" fill="#6f82d2"/><text x="361.5" y="619.4" font-size="9.5" font-weight="700" fill="#fff" text-anchor="middle">M5</text>
<rect x="622" y="617" width="24" height="12" rx="1.5" fill="#6f82d2"/><text x="634" y="626.4" font-size="9.5" font-weight="700" fill="#fff" text-anchor="middle">M23</text>
<rect x="714" y="616" width="24" height="11" rx="1.5" fill="#6f82d2"/><text x="726" y="624.4" font-size="9.5" font-weight="700" fill="#fff" text-anchor="middle">M20</text>
<rect x="620" y="507" width="26" height="12" rx="1.5" fill="#6f82d2"/><text x="633" y="516.4" font-size="9.5" font-weight="700" fill="#fff" text-anchor="middle">(M</text>
<rect x="660" y="512" width="20" height="11" rx="1.5" fill="#6f82d2"/><text x="670" y="520.4" font-size="9.5" font-weight="700" fill="#fff" text-anchor="middle"></text>
<rect x="910" y="622" width="23" height="11" rx="1.5" fill="#6c9c3c"/><text x="921.5" y="630.4" font-size="9.5" font-weight="700" fill="#fff" text-anchor="middle">E40</text>
<rect x="937" y="645" width="29" height="11" rx="1.5" fill="#6c9c3c"/><text x="951.5" y="653.4" font-size="9.5" font-weight="700" fill="#fff" text-anchor="middle">E403</text>
<rect x="1063" y="630" width="23" height="11" rx="1.5" fill="#6c9c3c"/><text x="1074.5" y="638.4" font-size="9.5" font-weight="700" fill="#fff" text-anchor="middle">E19</text>
<rect x="798" y="671" width="23" height="11" rx="1.5" fill="#e8705a"/><text x="809.5" y="679.4" font-size="9.5" font-weight="700" fill="#fff" text-anchor="middle">A16</text>
<rect x="844" y="686" width="24" height="11" rx="1.5" fill="#e8705a"/><text x="856" y="694.4" font-size="9.5" font-weight="700" fill="#fff" text-anchor="middle">A26</text>
<rect x="891" y="681" width="24" height="11" rx="1.5" fill="#e8705a"/><text x="903" y="689.4" font-size="9.5" font-weight="700" fill="#fff" text-anchor="middle">A25</text>
<text x="186" y="498.5" font-size="17" fill="#8f877b" letter-spacing="4.6" stroke="#f4f2ec" stroke-width="2" paint-order="stroke">WALES</text>
<text x="239" y="548" font-size="13.5" fill="#5a5a5a" text-anchor="start" stroke="#fff" stroke-width="2.5" stroke-opacity=".8" paint-order="stroke" stroke-linejoin="round" >Swansea</text>
<circle cx="266" cy="553.5" r="2.6" fill="#fff" stroke="#666" stroke-width="1.2"/>
<text x="320" y="570" font-size="13.5" fill="#5a5a5a" text-anchor="start" stroke="#fff" stroke-width="2.5" stroke-opacity=".8" paint-order="stroke" stroke-linejoin="round" >Cardiff</text>
<circle cx="340" cy="574.5" r="2.6" fill="#fff" stroke="#666" stroke-width="1.2"/>
<text x="378" y="574" font-size="13.5" fill="#5a5a5a" text-anchor="start" stroke="#fff" stroke-width="2.5" stroke-opacity=".8" paint-order="stroke" stroke-linejoin="round" >Bristol</text>
<circle cx="397" cy="579" r="2.6" fill="#fff" stroke="#666" stroke-width="1.2"/>
<text x="406" y="607" font-size="13.5" fill="#5a5a5a" text-anchor="start" stroke="#fff" stroke-width="2.5" stroke-opacity=".8" paint-order="stroke" stroke-linejoin="round" >Bath</text>
<circle cx="418" cy="592" r="2.6" fill="#fff" stroke="#666" stroke-width="1.2"/>
<text x="449" y="558" font-size="13.5" fill="#5a5a5a" text-anchor="start" stroke="#fff" stroke-width="2.5" stroke-opacity=".8" paint-order="stroke" stroke-linejoin="round" >Swindon</text>
<circle cx="474" cy="564" r="2.6" fill="#fff" stroke="#666" stroke-width="1.2"/>
<text x="421" y="524" font-size="15" fill="#83a054" text-anchor="start" stroke="#fff" stroke-width="2.5" stroke-opacity=".8" paint-order="stroke" stroke-linejoin="round" font-style="italic">Cotswolds</text>
<text x="434" y="542" font-size="15" fill="#83a054" text-anchor="start" stroke="#fff" stroke-width="2.5" stroke-opacity=".8" paint-order="stroke" stroke-linejoin="round" font-style="italic">AONB</text>
<text x="287" y="686" font-size="13.5" fill="#5a5a5a" text-anchor="start" stroke="#fff" stroke-width="2.5" stroke-opacity=".8" paint-order="stroke" stroke-linejoin="round" >Exeter</text>
<circle cx="305" cy="692" r="2.6" fill="#fff" stroke="#666" stroke-width="1.2"/>
<text x="283" y="727" font-size="13.5" fill="#5a5a5a" text-anchor="start" stroke="#fff" stroke-width="2.5" stroke-opacity=".8" paint-order="stroke" stroke-linejoin="round" >Torquay</text>
<text x="425" y="686" font-size="13.5" fill="#5a5a5a" text-anchor="start" stroke="#fff" stroke-width="2.5" stroke-opacity=".8" paint-order="stroke" stroke-linejoin="round" >Bournemouth</text>
<circle cx="465" cy="692" r="2.6" fill="#fff" stroke="#666" stroke-width="1.2"/>
<text x="507" y="692" font-size="13.5" fill="#5a5a5a" text-anchor="start" stroke="#fff" stroke-width="2.5" stroke-opacity=".8" paint-order="stroke" stroke-linejoin="round" >Portsmouth</text>
<circle cx="541" cy="677" r="2.6" fill="#fff" stroke="#666" stroke-width="1.2"/>
<text x="608" y="670" font-size="13.5" fill="#5a5a5a" text-anchor="start" stroke="#fff" stroke-width="2.5" stroke-opacity=".8" paint-order="stroke" stroke-linejoin="round" >Brighton</text>
<circle cx="633" cy="676" r="2.6" fill="#fff" stroke="#666" stroke-width="1.2"/>
<text x="470" y="658" font-size="13.5" fill="#5a5a5a" text-anchor="start" stroke="#fff" stroke-width="2.5" stroke-opacity=".8" paint-order="stroke" stroke-linejoin="round" >Sou</text>
<text x="626" y="457" font-size="13.5" fill="#5a5a5a" text-anchor="start" stroke="#fff" stroke-width="2.5" stroke-opacity=".8" paint-order="stroke" stroke-linejoin="round" >Cambridge</text>
<circle cx="657" cy="462" r="2.6" fill="#fff" stroke="#666" stroke-width="1.2"/>
<text x="734" y="480" font-size="13.5" fill="#5a5a5a" text-anchor="start" stroke="#fff" stroke-width="2.5" stroke-opacity=".8" paint-order="stroke" stroke-linejoin="round" >Ipswich</text>
<circle cx="757" cy="484.5" r="2.6" fill="#fff" stroke="#666" stroke-width="1.2"/>
<text x="700" y="505" font-size="13.5" fill="#5a5a5a" text-anchor="start" stroke="#fff" stroke-width="2.5" stroke-opacity=".8" paint-order="stroke" stroke-linejoin="round" >Colchester</text>
<circle cx="732" cy="510" r="2.6" fill="#fff" stroke="#666" stroke-width="1.2"/>
<text x="722" y="601" font-size="12.5" fill="#5a5a5a" text-anchor="start" stroke="#fff" stroke-width="2.5" stroke-opacity=".8" paint-order="stroke" stroke-linejoin="round" >Canterbury</text>
<circle cx="750" cy="606" r="2.6" fill="#fff" stroke="#666" stroke-width="1.2"/>
<text x="807" y="652" font-size="13.5" fill="#5a5a5a" text-anchor="start" stroke="#fff" stroke-width="2.5" stroke-opacity=".8" paint-order="stroke" stroke-linejoin="round" >Calais</text>
<circle cx="825" cy="656.5" r="2.6" fill="#fff" stroke="#666" stroke-width="1.2"/>
<text x="853" y="639" font-size="13.5" fill="#5a5a5a" text-anchor="start" stroke="#fff" stroke-width="2.5" stroke-opacity=".8" paint-order="stroke" stroke-linejoin="round" >Dunkirk</text>
<circle cx="875" cy="643.5" r="2.6" fill="#fff" stroke="#666" stroke-width="1.2"/>
<text x="936" y="612" font-size="13.5" fill="#5a5a5a" text-anchor="start" stroke="#fff" stroke-width="2.5" stroke-opacity=".8" paint-order="stroke" stroke-linejoin="round" >Bruges</text>
<circle cx="957" cy="617" r="2.6" fill="#fff" stroke="#666" stroke-width="1.2"/>
<text x="985" y="636" font-size="16" fill="#444" text-anchor="start" stroke="#fff" stroke-width="2.5" stroke-opacity=".8" paint-order="stroke" stroke-linejoin="round" >Ghent</text>
<circle cx="1005" cy="641" r="2.6" fill="#fff" stroke="#666" stroke-width="1.2"/>
<text x="1044" y="609" font-size="16" fill="#444" text-anchor="start" stroke="#fff" stroke-width="2.5" stroke-opacity=".8" paint-order="stroke" stroke-linejoin="round" >Antwe</text>
<circle cx="1070" cy="615" r="2.6" fill="#fff" stroke="#666" stroke-width="1.2"/>
<text x="1036" y="665" font-size="16" fill="#333" text-anchor="start" stroke="#fff" stroke-width="2.5" stroke-opacity=".8" paint-order="stroke" stroke-linejoin="round" >Brussel</text>
<circle cx="1066" cy="672" r="3.2" fill="#fff" stroke="#444" stroke-width="1.2"/><circle cx="1066" cy="672" r="1.4" fill="#333"/>
<text x="929" y="700" font-size="13.5" fill="#5a5a5a" text-anchor="start" stroke="#fff" stroke-width="2.5" stroke-opacity=".8" paint-order="stroke" stroke-linejoin="round" >Lille</text>
<circle cx="940" cy="706" r="2.6" fill="#fff" stroke="#666" stroke-width="1.2"/>
<text x="1025" y="477" font-size="15.5" fill="#444" text-anchor="start" stroke="#fff" stroke-width="2.5" stroke-opacity=".8" paint-order="stroke" stroke-linejoin="round" >The Hagu</text>
<circle cx="1061" cy="483" r="2.6" fill="#fff" stroke="#666" stroke-width="1.2"/>
<text x="1043" y="526" font-size="15.5" fill="#444" text-anchor="start" stroke="#fff" stroke-width="2.5" stroke-opacity=".8" paint-order="stroke" stroke-linejoin="round" >Rotter</text>
<circle cx="1078" cy="507" r="2.6" fill="#fff" stroke="#666" stroke-width="1.2"/>
<text x="645" y="563" font-size="20" fill="#333" text-anchor="start" stroke="#fff" stroke-width="2.5" stroke-opacity=".8" paint-order="stroke" stroke-linejoin="round" >n</text>
<path d="M441 578 L515 486" stroke="#2e9a84" stroke-width="3" stroke-linecap="round" stroke-opacity=".92"/>
<path d="M441 578 L501 537" stroke="#2a9648" stroke-width="3" stroke-linecap="round" stroke-opacity=".92"/>
<path d="M441 578 L511 560" stroke="#2a9648" stroke-width="3" stroke-linecap="round" stroke-opacity=".92"/>
<path d="M441 578 L520 577" stroke="#8a6a32" stroke-width="3" stroke-linecap="round" stroke-opacity=".92"/>
<path d="M441 580 L520 579" stroke="#6c8f2f" stroke-width="2.5" stroke-linecap="round" stroke-opacity=".92"/>
<path d="M441 582 L516 593" stroke="#2e9a84" stroke-width="4" stroke-linecap="round" stroke-opacity=".92"/>
<path d="M441 578 L512 622" stroke="#b04a5a" stroke-width="3" stroke-linecap="round" stroke-opacity=".92"/>
<path d="M441 578 L489 637" stroke="#9a4a66" stroke-width="3" stroke-linecap="round" stroke-opacity=".92"/>
<path d="M629 520 L656 529" stroke="#2a9648" stroke-width="2.4" stroke-linecap="round" stroke-opacity=".92"/>
<path d="M656 529 L631 537" stroke="#2a9648" stroke-width="2.4" stroke-linecap="round" stroke-opacity=".92"/>
<path d="M571 666 L601 659" stroke="#9a4a58" stroke-width="2.6" stroke-linecap="round" stroke-opacity=".92"/>
<path d="M441 578 L560 583" stroke="#3b8f7a" stroke-width="2" stroke-linecap="round" stroke-opacity=".92"/>
<g opacity="1"><rect x="556" y="521" width="72" height="16" rx="2.5" fill="#2a9648" stroke="#e3ece6" stroke-width="1.6" stroke-opacity=".85"/></g>
<g opacity="1"><rect x="557" y="527" width="40" height="18" rx="2.5" fill="#6c8f2f" stroke="#e3ece6" stroke-width="1.6" stroke-opacity=".85"/></g>
<g opacity="1"><rect x="497" y="500" width="33" height="20" rx="2.5" fill="#2e9a84" stroke="#e3ece6" stroke-width="1.6" stroke-opacity=".85"/></g>
<g opacity="1"><rect x="520" y="531" width="42" height="16" rx="7" fill="#2e9a84" stroke="#e3ece6" stroke-width="1.6" stroke-opacity=".85"/></g>
<g opacity="1"><rect x="545" y="498" width="30" height="22" rx="6" fill="#2a9648" stroke="#e3ece6" stroke-width="1.6" stroke-opacity=".85"/><text x="560" y="513.9" font-size="14.2" font-weight="700" fill="#e9f3ee" text-anchor="middle">0</text></g>
<g opacity="1"><rect x="563" y="500" width="37" height="22" rx="3" fill="#2a9648" stroke="#e3ece6" stroke-width="1.6" stroke-opacity=".85"/><text x="581.5" y="515.9" font-size="14.2" font-weight="700" fill="#e9f3ee" text-anchor="middle">1</text></g>
<g opacity="1"><rect x="590" y="505" width="35" height="20" rx="3" fill="#2a9648" stroke="#e3ece6" stroke-width="1.6" stroke-opacity=".85"/></g>
<g opacity="1"><rect x="503" y="518" width="20" height="20.5" rx="2.5" fill="#2e9a84" stroke="#e3ece6" stroke-width="1.6" stroke-opacity=".85"/><text x="513" y="533.15" font-size="14.2" font-weight="700" fill="#e9f3ee" text-anchor="middle">09</text></g>
<rect x="504" y="446.6" width="6.4" height="6.4" rx=".8" fill="#1f6b2a"/><rect x="513.5" y="446.6" width="6.4" height="6.4" rx=".8" fill="#1f6b2a"/><rect x="523" y="446.6" width="6.4" height="6.4" rx=".8" fill="#1f6b2a"/>
<rect x="565" y="453.5" width="6.4" height="6.4" rx=".8" fill="#1f6b2a"/><rect x="574.5" y="453.5" width="6.4" height="6.4" rx=".8" fill="#1f6b2a"/><rect x="584" y="453.5" width="6.4" height="6.4" rx=".8" fill="#1f6b2a"/>
<rect x="601" y="466" width="6.4" height="6.4" rx=".8" fill="#1f6b2a"/><rect x="610.5" y="466" width="6.4" height="6.4" rx=".8" fill="#1f6b2a"/>
<rect x="643" y="482" width="6.4" height="6.4" rx=".8" fill="#1f6b2a"/><rect x="652.5" y="482" width="6.4" height="6.4" rx=".8" fill="#1f6b2a"/><rect x="662" y="482" width="6.4" height="6.4" rx=".8" fill="#1f6b2a"/>
<rect x="540" y="470" width="6.4" height="6.4" rx=".8" fill="#1f6b2a"/><rect x="545" y="470" width="6.4" height="6.4" rx=".8" fill="#1f6b2a"/>
<g opacity="1"><path d="M511 477.5 L516.5 485 L522 477.5 Z" fill="#2e9a84" stroke="#dfeae2" stroke-width="1.2" stroke-opacity=".8"/><rect x="497.4" y="457.4" width="39.4" height="21.1" rx="2.5" fill="#2e9a84" stroke="#e3ece6" stroke-width="1.6" stroke-opacity=".85"/><path d="M512 477.3 L516.5 483.5 L521 477.3 Z" fill="#2e9a84"/><text x="511.6" y="472.85" font-size="14.2" font-weight="700" fill="#e9f3ee" text-anchor="middle">08</text><text x="519.9" y="468.25" font-size="9.6" font-weight="700" fill="#e9f3ee">27</text></g>
<g opacity="1"><rect x="556" y="466" width="39" height="24" rx="9" fill="#2a9648" stroke="#e3ece6" stroke-width="1.6" stroke-opacity=".85"/></g>
<g opacity="1"><path d="M569.8 486 L575.3 496 L580.8 486 Z" fill="#2a9648" stroke="#dfeae2" stroke-width="1.2" stroke-opacity=".8"/><rect x="558.4" y="462.8" width="39.6" height="24.2" rx="9" fill="#2a9648" stroke="#e3ece6" stroke-width="1.6" stroke-opacity=".85"/><path d="M570.8 485.8 L575.3 494.5 L579.8 485.8 Z" fill="#2a9648"/><text x="572.7" y="479.8" font-size="14.2" font-weight="700" fill="#e9f3ee" text-anchor="middle">14</text><text x="581" y="475.2" font-size="9.6" font-weight="700" fill="#e9f3ee">09</text></g>
<g opacity="1"><path d="M596.3 505 L601.8 516 L607.3 505 Z" fill="#2a9648" stroke="#dfeae2" stroke-width="1.2" stroke-opacity=".8"/><rect x="582.6" y="484" width="39" height="22" rx="9" fill="#2a9648" stroke="#e3ece6" stroke-width="1.6" stroke-opacity=".85"/><path d="M597.3 504.8 L601.8 514.5 L606.3 504.8 Z" fill="#2a9648"/><text x="596.6" y="499.9" font-size="14.2" font-weight="700" fill="#e9f3ee" text-anchor="middle">13</text><text x="604.9" y="495.3" font-size="9.6" font-weight="700" fill="#e9f3ee">36</text></g>
<g opacity="1"><path d="M650.5 521.4 L656 529 L661.5 521.4 Z" fill="#2a9648" stroke="#dfeae2" stroke-width="1.2" stroke-opacity=".8"/><rect x="637" y="500.3" width="39.8" height="22.1" rx="9" fill="#2a9648" stroke="#e3ece6" stroke-width="1.6" stroke-opacity=".85"/><path d="M651.5 521.2 L656 527.5 L660.5 521.2 Z" fill="#2a9648"/><text x="651.4" y="516.25" font-size="14.2" font-weight="700" fill="#e9f3ee" text-anchor="middle">12</text><text x="659.7" y="511.65" font-size="9.6" font-weight="700" fill="#e9f3ee">36</text></g>
<rect x="526" y="486.5" width="6.4" height="6.4" rx=".8" fill="#1f6b2a"/><rect x="535" y="486.5" width="6.4" height="6.4" rx=".8" fill="#1f6b2a"/><rect x="544" y="486.5" width="6.4" height="6.4" rx=".8" fill="#1f6b2a"/><rect x="553" y="486.5" width="6.4" height="6.4" rx=".8" fill="#1f6b2a"/>
<rect x="510" y="497" width="6.4" height="6.4" rx=".8" fill="#1f6b2a"/>
<rect x="510" y="509" width="6.4" height="6.4" rx=".8" fill="#1f6b2a"/>
<g opacity="1"><path d="M530.1 515.5 L535.6 525 L541.1 515.5 Z" fill="#2a9648" stroke="#dfeae2" stroke-width="1.2" stroke-opacity=".8"/><rect x="515.7" y="495" width="39.7" height="21.5" rx="2.5" fill="#2a9648" stroke="#e3ece6" stroke-width="1.6" stroke-opacity=".85"/><path d="M531.1 515.3 L535.6 523.5 L540.1 515.3 Z" fill="#2a9648"/><text x="530.05" y="510.65" font-size="14.2" font-weight="700" fill="#e9f3ee" text-anchor="middle">15</text><text x="538.35" y="506.05" font-size="9.6" font-weight="700" fill="#e9f3ee">17</text></g>
<rect x="528" y="521" width="6.4" height="6.4" rx=".8" fill="#1f6b2a"/>
<rect x="545" y="521" width="6.4" height="6.4" rx=".8" fill="#1f6b2a"/>
<rect x="563" y="522" width="6.4" height="6.4" rx=".8" fill="#1f6b2a"/><rect x="572.5" y="522" width="6.4" height="6.4" rx=".8" fill="#1f6b2a"/><rect x="582" y="522" width="6.4" height="6.4" rx=".8" fill="#1f6b2a"/><rect x="591.5" y="522" width="6.4" height="6.4" rx=".8" fill="#1f6b2a"/>
<rect x="601" y="524" width="6.4" height="6.4" rx=".8" fill="#1f6b2a"/><rect x="610.5" y="524" width="6.4" height="6.4" rx=".8" fill="#1f6b2a"/><rect x="620" y="524" width="6.4" height="6.4" rx=".8" fill="#1f6b2a"/>
<rect x="526" y="533" width="6.4" height="6.4" rx=".8" fill="#1f6b2a"/><rect x="533" y="533" width="6.4" height="6.4" rx=".8" fill="#1f6b2a"/><rect x="540" y="533" width="6.4" height="6.4" rx=".8" fill="#1f6b2a"/>
<rect x="530" y="541" width="6.4" height="6.4" rx=".8" fill="#1f6b2a"/><rect x="538" y="541" width="6.4" height="6.4" rx=".8" fill="#1f6b2a"/>
<rect x="561" y="531" width="6.4" height="6.4" rx=".8" fill="#1f6b2a"/><rect x="570.5" y="531" width="6.4" height="6.4" rx=".8" fill="#1f6b2a"/><rect x="580" y="531" width="6.4" height="6.4" rx=".8" fill="#1f6b2a"/><rect x="589.5" y="531" width="6.4" height="6.4" rx=".8" fill="#1f6b2a"/><rect x="599" y="531" width="6.4" height="6.4" rx=".8" fill="#1f6b2a"/><rect x="608.5" y="531" width="6.4" height="6.4" rx=".8" fill="#1f6b2a"/>
<rect x="618" y="527" width="6.4" height="6.4" rx=".8" fill="#1f6b2a"/><rect x="627.5" y="527" width="6.4" height="6.4" rx=".8" fill="#1f6b2a"/>
<rect x="618" y="540" width="6.4" height="6.4" rx=".8" fill="#1f6b2a"/><rect x="627.5" y="540" width="6.4" height="6.4" rx=".8" fill="#1f6b2a"/><rect x="637" y="540" width="6.4" height="6.4" rx=".8" fill="#1f6b2a"/>
<rect x="596" y="533" width="6.4" height="6.4" rx=".8" fill="#1f6b2a"/>
<rect x="597" y="545" width="6.4" height="6.4" rx=".8" fill="#1f6b2a"/>
<rect x="596" y="556" width="6.4" height="6.4" rx=".8" fill="#1f6b2a"/>
<g opacity="1"><rect x="548" y="561.4" width="40" height="29.4" rx="2.5" fill="#2e9a84" stroke="#e3ece6" stroke-width="1.6" stroke-opacity=".85"/></g>
<g opacity="1"><rect x="540" y="559" width="40" height="31" rx="2.5" fill="#2e9a84" stroke="#e3ece6" stroke-width="1.6" stroke-opacity=".85"/></g>
<g opacity="1"><rect x="532" y="556.6" width="40" height="32.6" rx="2.5" fill="#2e9a84" stroke="#e3ece6" stroke-width="1.6" stroke-opacity=".85"/></g>
<g opacity="1"><rect x="524" y="554.2" width="40" height="34.2" rx="2.5" fill="#2e9a84" stroke="#e3ece6" stroke-width="1.6" stroke-opacity=".85"/></g>
<g opacity="1"><rect x="585" y="568" width="27" height="20" rx="7" fill="#6c8f2f" stroke="#e3ece6" stroke-width="1.6" stroke-opacity=".85"/><text x="598.5" y="582.9" font-size="14.2" font-weight="700" fill="#e9f3ee" text-anchor="middle">11</text></g>
<g opacity="1"><rect x="605.4" y="562.6" width="47.6" height="22.1" rx="2.5" fill="#6c8f2f" stroke="#e3ece6" stroke-width="1.6" stroke-opacity=".85"/></g>
<rect x="510" y="555" width="6.4" height="6.4" rx=".8" fill="#1f6b2a"/><rect x="519.5" y="555" width="6.4" height="6.4" rx=".8" fill="#1f6b2a"/><rect x="529" y="555" width="6.4" height="6.4" rx=".8" fill="#1f6b2a"/>
<g opacity="1"><path d="M567.5 562.4 L573 569.5 L578.5 562.4 Z" fill="#6c8f2f" stroke="#dfeae2" stroke-width="1.2" stroke-opacity=".8"/><rect x="553.2" y="541.3" width="39.8" height="22.1" rx="2.5" fill="#6c8f2f" stroke="#e3ece6" stroke-width="1.6" stroke-opacity=".85"/><path d="M568.5 562.2 L573 568 L577.5 562.2 Z" fill="#6c8f2f"/><text x="567.6" y="557.25" font-size="14.2" font-weight="700" fill="#e9f3ee" text-anchor="middle">08</text><text x="575.9" y="552.65" font-size="9.6" font-weight="700" fill="#e9f3ee">37</text></g>
<g opacity="1"><rect x="609" y="549.4" width="39.8" height="21.3" rx="2.5" fill="#6c8f2f" stroke="#e3ece6" stroke-width="1.6" stroke-opacity=".85"/><text x="623.4" y="564.95" font-size="14.2" font-weight="700" fill="#e9f3ee" text-anchor="middle">15</text><text x="631.7" y="560.35" font-size="9.6" font-weight="700" fill="#e9f3ee">19</text></g>
<rect x="618" y="575" width="6.4" height="6.4" rx=".8" fill="#1f6b2a"/><rect x="627.5" y="575" width="6.4" height="6.4" rx=".8" fill="#1f6b2a"/><rect x="637" y="575" width="6.4" height="6.4" rx=".8" fill="#1f6b2a"/>
<rect x="545" y="566" width="6.4" height="6.4" rx=".8" fill="#1f6b2a"/>
<rect x="553" y="563" width="6.4" height="6.4" rx=".8" fill="#1f6b2a"/><rect x="561" y="563" width="6.4" height="6.4" rx=".8" fill="#1f6b2a"/>
<rect x="574" y="571" width="6.4" height="6.4" rx=".8" fill="#1f6b2a"/>
<g opacity="1"><path d="M534.5 605 L540 612 L545.5 605 Z" fill="#2e9a84" stroke="#dfeae2" stroke-width="1.2" stroke-opacity=".8"/><rect x="521" y="586" width="39" height="20" rx="2.5" fill="#2e9a84" stroke="#e3ece6" stroke-width="1.6" stroke-opacity=".85"/><path d="M535.5 604.8 L540 610.5 L544.5 604.8 Z" fill="#2e9a84"/></g>
<g opacity="1"><path d="M531.5 600.6 L537 608 L542.5 600.6 Z" fill="#2e9a84" stroke="#dfeae2" stroke-width="1.2" stroke-opacity=".8"/><rect x="517.2" y="579.6" width="39.8" height="22" rx="2.5" fill="#2e9a84" stroke="#e3ece6" stroke-width="1.6" stroke-opacity=".85"/><path d="M532.5 600.4 L537 606.5 L541.5 600.4 Z" fill="#2e9a84"/><text x="531.6" y="595.5" font-size="14.2" font-weight="700" fill="#e9f3ee" text-anchor="middle">14</text><text x="539.9" y="590.9" font-size="9.6" font-weight="700" fill="#e9f3ee">03</text></g>
<g opacity="1"><path d="M514.5 585.2 L520 592 L525.5 585.2 Z" fill="#2e9a84" stroke="#dfeae2" stroke-width="1.2" stroke-opacity=".8"/><rect x="503.2" y="565.6" width="39.8" height="20.6" rx="2.5" fill="#2e9a84" stroke="#e3ece6" stroke-width="1.6" stroke-opacity=".85"/><path d="M515.5 585 L520 590.5 L524.5 585 Z" fill="#2e9a84"/><text x="517.6" y="580.8" font-size="14.2" font-weight="700" fill="#e9f3ee" text-anchor="middle">16</text><text x="525.9" y="576.2" font-size="9.6" font-weight="700" fill="#e9f3ee">00</text></g>
<g opacity="1"><path d="M624.2 605.8 L629.7 613 L635.2 605.8 Z" fill="#6c8f2f" stroke="#dfeae2" stroke-width="1.2" stroke-opacity=".8"/><rect x="610.6" y="585.4" width="39.7" height="21.4" rx="2.5" fill="#6c8f2f" stroke="#e3ece6" stroke-width="1.6" stroke-opacity=".85"/><path d="M625.2 605.6 L629.7 611.5 L634.2 605.6 Z" fill="#6c8f2f"/><text x="624.95" y="601" font-size="14.2" font-weight="700" fill="#e9f3ee" text-anchor="middle">13</text><text x="633.25" y="596.4" font-size="9.6" font-weight="700" fill="#e9f3ee">35</text></g>
<g opacity="1"><rect x="560" y="586" width="38" height="14" rx="3" fill="#a43e70" stroke="#e3ece6" stroke-width="1.6" stroke-opacity=".85"/></g>
<rect x="576" y="582" width="6.4" height="6.4" rx=".8" fill="#1f6b2a"/><rect x="586" y="582" width="6.4" height="6.4" rx=".8" fill="#1f6b2a"/><rect x="596" y="582" width="6.4" height="6.4" rx=".8" fill="#1f6b2a"/>
<g opacity="1"><rect x="569.4" y="593.5" width="38.2" height="20.5" rx="10" fill="#a43e70" stroke="#e3ece6" stroke-width="1.6" stroke-opacity=".85"/></g>
<text x="594" y="607" font-size="10.5" font-weight="700" fill="#f0dbe6">08</text>
<g opacity="1"><path d="M525.5 629 L531 636 L536.5 629 Z" fill="#c23a4b" stroke="#dfeae2" stroke-width="1.2" stroke-opacity=".8"/><rect x="515" y="609" width="28.5" height="21" rx="2.5" fill="#c23a4b" stroke="#e3ece6" stroke-width="1.6" stroke-opacity=".85"/><path d="M526.5 628.8 L531 634.5 L535.5 628.8 Z" fill="#c23a4b"/><text x="523.75" y="624.4" font-size="14.2" font-weight="700" fill="#e9f3ee" text-anchor="middle">13</text><text x="532.05" y="619.8" font-size="9.6" font-weight="700" fill="#e9f3ee">3</text></g>
<g opacity="1"><rect x="545.7" y="614" width="49.3" height="18" rx="2.5" fill="#a43e70" stroke="#e3ece6" stroke-width="1.6" stroke-opacity=".85"/></g>
<text x="553" y="630" font-size="14.2" font-weight="700" fill="#f0dbe6">1</text>
<rect x="563.5" y="597" width="6.4" height="6.4" rx=".8" fill="#1f6b2a"/><rect x="573" y="597" width="6.4" height="6.4" rx=".8" fill="#1f6b2a"/><rect x="582.5" y="597" width="6.4" height="6.4" rx=".8" fill="#1f6b2a"/>
<rect x="561" y="606" width="6.4" height="6.4" rx=".8" fill="#1f6b2a"/><rect x="571" y="606" width="6.4" height="6.4" rx=".8" fill="#1f6b2a"/>
<g opacity="1"><rect x="556.8" y="625" width="23.2" height="18" rx="2.5" fill="#a43e70" stroke="#e3ece6" stroke-width="1.6" stroke-opacity=".85"/></g>
<text x="562" y="641" font-size="14.2" font-weight="700" fill="#f0dbe6">10</text>
<rect x="563.5" y="613" width="6.4" height="6.4" rx=".8" fill="#1f6b2a"/><rect x="573" y="613" width="6.4" height="6.4" rx=".8" fill="#1f6b2a"/><rect x="582.5" y="613" width="6.4" height="6.4" rx=".8" fill="#1f6b2a"/>
<rect x="586" y="619" width="6.4" height="6.4" rx=".8" fill="#1f6b2a"/><rect x="595" y="619" width="6.4" height="6.4" rx=".8" fill="#1f6b2a"/>
<rect x="595" y="621" width="6.4" height="6.4" rx=".8" fill="#1f6b2a"/><rect x="604.5" y="621" width="6.4" height="6.4" rx=".8" fill="#1f6b2a"/><rect x="614" y="621" width="6.4" height="6.4" rx=".8" fill="#1f6b2a"/>
<g opacity="1"><rect x="577.4" y="626.6" width="37.6" height="23.4" rx="2.5" fill="#a43e70" stroke="#e3ece6" stroke-width="1.6" stroke-opacity=".85"/></g>
<g opacity="1"><rect x="581" y="629" width="38" height="23" rx="2.5" fill="#a43e70" stroke="#e3ece6" stroke-width="1.6" stroke-opacity=".85"/></g>
<rect x="495.7" y="622" width="6.4" height="6.4" rx=".8" fill="#1f6b2a"/><rect x="505.2" y="622" width="6.4" height="6.4" rx=".8" fill="#1f6b2a"/><rect x="514.7" y="622" width="6.4" height="6.4" rx=".8" fill="#1f6b2a"/>
<g opacity="1"><rect x="546" y="641" width="26" height="25" rx="2.5" fill="#a43e70" stroke="#e3ece6" stroke-width="1.6" stroke-opacity=".85"/></g>
<g opacity="1"><rect x="538" y="641" width="26" height="25" rx="2.5" fill="#a43e70" stroke="#e3ece6" stroke-width="1.6" stroke-opacity=".85"/></g>
<g opacity="1"><path d="M534.5 668 L540 676 L545.5 668 Z" fill="#a43e70" stroke="#dfeae2" stroke-width="1.2" stroke-opacity=".8"/><rect x="530" y="641" width="26" height="28" rx="2.5" fill="#a43e70" stroke="#e3ece6" stroke-width="1.6" stroke-opacity=".85"/><path d="M535.5 667.8 L540 674.5 L544.5 667.8 Z" fill="#a43e70"/></g>
<text x="553" y="660" font-size="13" font-weight="700" fill="#f0dbe6">3</text>
<g opacity="1"><path d="M519.5 663 L525 670 L530.5 663 Z" fill="#a43e70" stroke="#dfeae2" stroke-width="1.2" stroke-opacity=".8"/><rect x="506.8" y="643.5" width="38.2" height="20.5" rx="2.5" fill="#a43e70" stroke="#e3ece6" stroke-width="1.6" stroke-opacity=".85"/><path d="M520.5 662.8 L525 668.5 L529.5 662.8 Z" fill="#a43e70"/><text x="520.4" y="658.65" font-size="14.2" font-weight="700" fill="#e9f3ee" text-anchor="middle">10</text><text x="528.7" y="654.05" font-size="9.6" font-weight="700" fill="#e9f3ee">06</text></g>
<rect x="530" y="633" width="6.4" height="6.4" rx=".8" fill="#1f6b2a"/><rect x="539.5" y="633" width="6.4" height="6.4" rx=".8" fill="#1f6b2a"/><rect x="549" y="633" width="6.4" height="6.4" rx=".8" fill="#1f6b2a"/><rect x="558.5" y="633" width="6.4" height="6.4" rx=".8" fill="#1f6b2a"/>
<g opacity="1"><path d="M502.7 652 L508.2 660 L513.7 652 Z" fill="#a43e70" stroke="#dfeae2" stroke-width="1.2" stroke-opacity=".8"/><rect x="489" y="632.5" width="38.4" height="20.5" rx="2.5" fill="#a43e70" stroke="#e3ece6" stroke-width="1.6" stroke-opacity=".85"/><path d="M503.7 651.8 L508.2 658.5 L512.7 651.8 Z" fill="#a43e70"/><text x="502.7" y="647.65" font-size="14.2" font-weight="700" fill="#e9f3ee" text-anchor="middle">15</text><text x="511" y="643.05" font-size="9.6" font-weight="700" fill="#e9f3ee">37</text></g>
<g opacity="1"><path d="M597.5 650.6 L603 660 L608.5 650.6 Z" fill="#a43e70" stroke="#dfeae2" stroke-width="1.2" stroke-opacity=".8"/><rect x="584" y="631" width="39" height="20.6" rx="2.5" fill="#a43e70" stroke="#e3ece6" stroke-width="1.6" stroke-opacity=".85"/><path d="M598.5 650.4 L603 658.5 L607.5 650.4 Z" fill="#a43e70"/><text x="598" y="646.2" font-size="14.2" font-weight="700" fill="#e9f3ee" text-anchor="middle">12</text><text x="606.3" y="641.6" font-size="9.6" font-weight="700" fill="#e9f3ee">30</text></g>
<circle cx="441" cy="578" r="13.8" fill="#fff" stroke="#222" stroke-width="1.6"/><path d="M432 579l9-8 9 8h-2.500v6h-4.500v-4.500h-4v4.500h-4.500v-6z" fill="#111"/><rect x="445.500" y="571" width="2.200" height="4" fill="#111"/>
<rect x="651" y="713" width="435" height="14" fill="#fff" fill-opacity=".55"/>
<text x="656" y="724" font-size="10.3" fill="#666" text-anchor="start" >Map data ©2017 GeoBasis-DE/BKG (©2009), Google</text>
<text x="916" y="724" font-size="10.3" fill="#666" text-anchor="start" >Terms of Use</text>
<text x="989" y="724" font-size="10.3" fill="#666" text-anchor="start" >Report a map error</text>
<rect x="963" y="689" width="123" height="20" fill="#fff" fill-opacity=".75"/>
<text x="968" y="703" font-size="12" fill="#2a7fc1" text-anchor="start" >Leaflet</text>
<text x="1008" y="703" font-size="12" fill="#555" text-anchor="start" >| ©</text>
<text x="1024" y="703" font-size="12" fill="#2a7fc1" text-anchor="start" >Google Inc</text>
<rect x="19" y="688" width="71" height="15" fill="#fff" fill-opacity=".55"/><path d="M19 688v16h71v-16" fill="none" stroke="#777" stroke-width="1.6"/>
<text x="25" y="700.5" font-size="11" fill="#444" text-anchor="start" >50 km</text>
<rect x="19" y="705" width="68" height="15" fill="#fff" fill-opacity=".55"/><path d="M19 722v-17h68v17" fill="none" stroke="#777" stroke-width="1.6"/>
<text x="30" y="721" font-size="19" fill-opacity=".8"><tspan fill="#e8a29a">o</tspan><tspan fill="#efd38a">o</tspan><tspan fill="#9dbbe8">g</tspan><tspan fill="#a8d0a0">l</tspan><tspan fill="#e8a29a">e</tspan></text>
<text x="25" y="718" font-size="11" fill="#444" text-anchor="start" >30 mi</text>
<rect x="23" y="445" width="28" height="56" rx="4" fill="#fff" stroke="#c8c8c8" stroke-width="1"/><path d="M23 473h28" stroke="#ccc"/><path d="M31 459h12M37 453v12M32 487h10" stroke="#111" stroke-width="2.2"/>
<rect x="66" y="467" width="9" height="11" fill="#fff"/>
</svg>
<!--/MAP-->
</div></div>
<!--FOOTER-->
<div class="abs w t" style="left:10px;top:736px;font-size:12px">©</div>
<div class="abs t" style="left:25px;top:737px;font-size:10.800px;font-weight:700;color:#1e5a98;text-decoration:underline">Magenta Technology</div>
<div class="abs w t" style="left:135px;top:736px;font-size:12px">2017</div>
<svg class="abs" style="left:1214px;top:733px" width="146" height="33" viewBox="1214 733 146 33">
<defs><radialGradient id="lg" cx=".4" cy=".4" r=".65"><stop offset="0" stop-color="#7a2a48"/><stop offset=".6" stop-color="#b25c7c"/><stop offset="1" stop-color="#f0b8c8"/></radialGradient></defs>
<circle cx="1230" cy="748.500" r="13.500" fill="url(#lg)"/>
<g fill="none" stroke="#f6cbd6" stroke-width="1.300"><circle cx="1230" cy="748.500" r="12.800"/><ellipse cx="1230" cy="748.500" rx="12.500" ry="5.500" transform="rotate(35 1230 748.500)"/><ellipse cx="1230" cy="748.500" rx="12.500" ry="6" transform="rotate(-40 1230 748.500)"/><ellipse cx="1230" cy="748.500" rx="5" ry="12.500" transform="rotate(10 1230 748.500)"/><ellipse cx="1229" cy="751" rx="11" ry="8"/></g>
<text x="1250" y="753.500" font-family="Liberation Sans" font-size="21" font-weight="400" fill="#f2f2f2" stroke="#f2f2f2" stroke-width=".5" textLength="97" lengthAdjust="spacingAndGlyphs">magenta</text>
<text x="1300" y="763" font-family="Liberation Sans" font-size="8.500" font-weight="700" fill="#999" textLength="48" lengthAdjust="spacingAndGlyphs">_technology</text>
</svg>
<!--/FOOTER-->
</body></html>
